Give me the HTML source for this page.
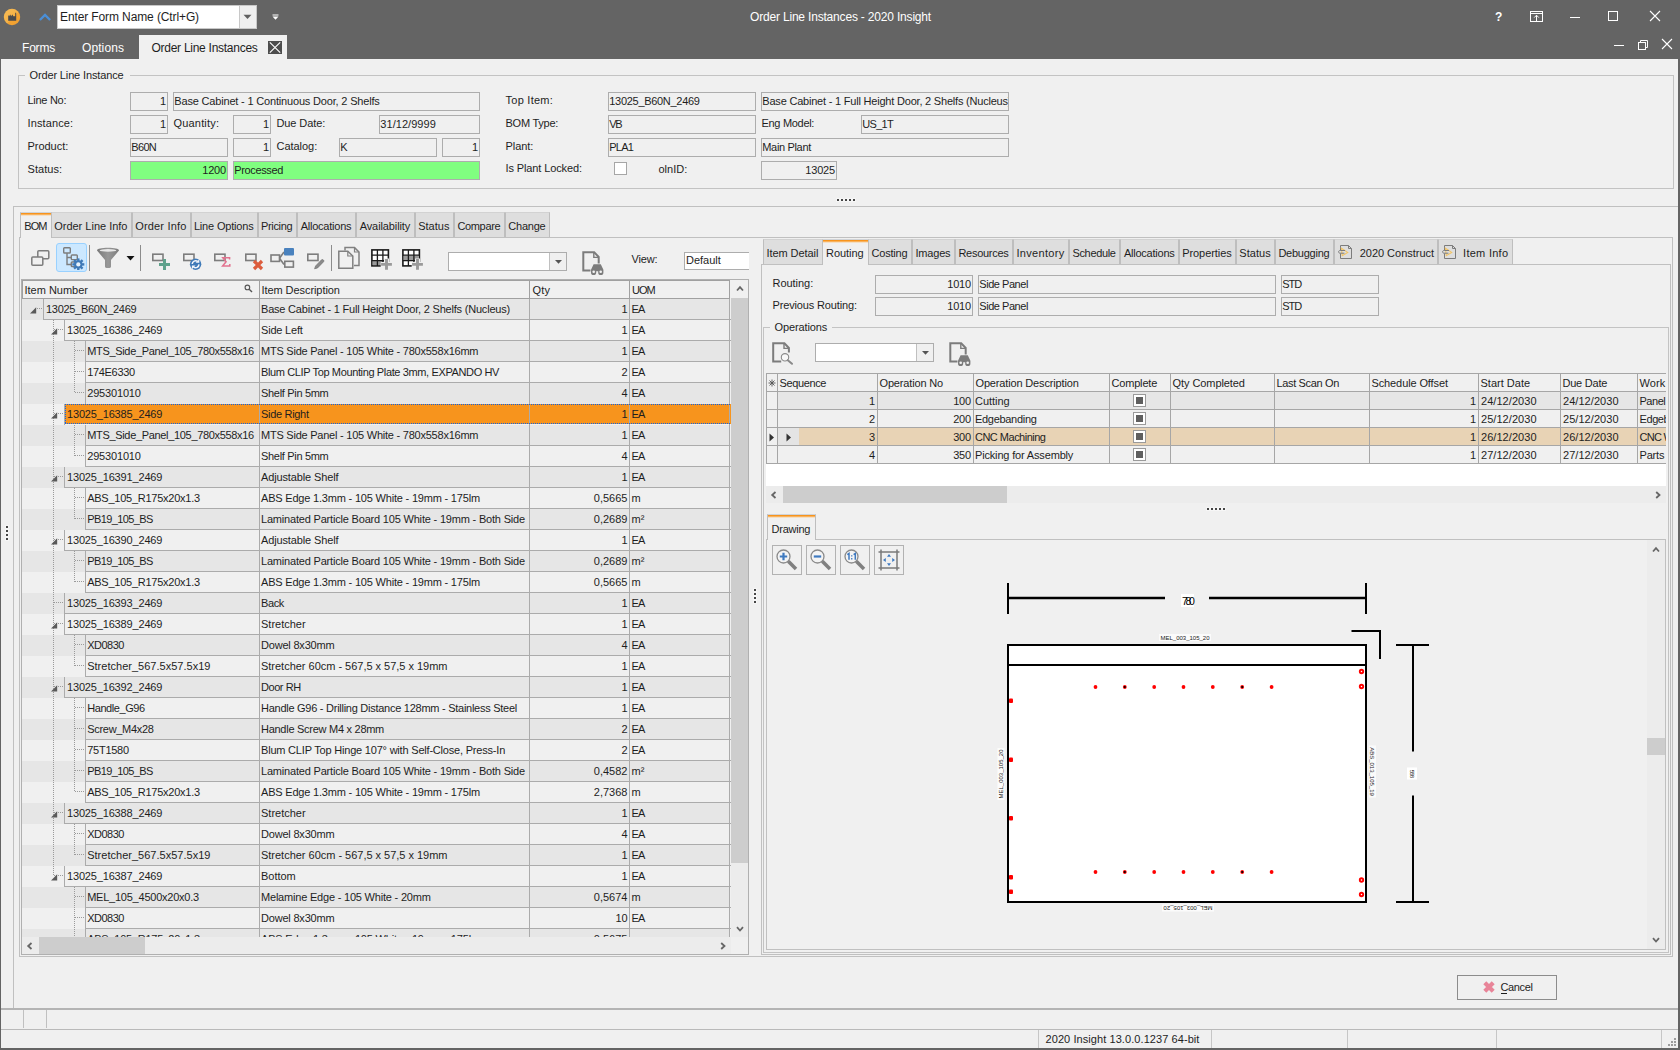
<!DOCTYPE html><html><head><meta charset="utf-8"><title>Order Line Instances - 2020 Insight</title><style>
*{box-sizing:border-box;margin:0;padding:0}
html,body{width:1680px;height:1050px;overflow:hidden;background:#f0f0f0}
body{position:relative;font-family:"Liberation Sans",sans-serif;font-size:11px;color:#1e1e1e}
div,span,svg{position:absolute}
.t{white-space:nowrap}
.f{border:1px solid #adadad;background:#f0f0f0;white-space:nowrap;overflow:hidden;font-size:11px;line-height:15px;padding:1px 1px 0 0.300px;letter-spacing:-0.2px}
.r{text-align:right}
.hl{height:1px;background:#b9b9b9}
.vl{width:1px;background:#b9b9b9}
.tab{background:#dedede;border:1px solid #bebebe;border-top-color:#d2d2d2;border-bottom:none}
.tabA{background:linear-gradient(to bottom,#f7941d 0,#f7941d 1px,#f9b25c 1px,#f9b25c 2px,#f4dfc4 2px,#f4dfc4 3px,#f0f0f0 3px);border:1px solid #bebebe;border-top-color:#cfd3d8;border-bottom:none}
</style></head><body>
<div style="left:0px;top:0px;width:1680px;height:59px;background:#646464"></div>
<div style="left:0px;top:59px;width:1px;height:991px;background:#646464"></div>
<div style="left:1678px;top:59px;width:2px;height:991px;background:#646464"></div>
<div style="left:0px;top:1048px;width:1680px;height:2px;background:#646464"></div>
<svg style="left:3px;top:8px" width="18" height="18" viewBox="0 0 18 18"><defs><linearGradient id="ag" x1="0" y1="0" x2="1" y2="1"><stop offset="0" stop-color="#f7bd58"/><stop offset="0.550" stop-color="#f5b145"/><stop offset="0.560" stop-color="#f2a232"/><stop offset="1" stop-color="#f0a030"/></linearGradient></defs><circle cx="9" cy="9" r="8.200" fill="url(#ag)"/><path d="M5.200 12.700V7l0.900 1.300 1.100-1.700 1 1.700 1.100-1.700 1.100 1.700h1.800V4.800h1V12.700z" fill="#4a4a4c"/></svg>
<svg style="left:38px;top:12px" width="14" height="10" viewBox="0 0 14 10"><path d="M1.900 8L7 2.900l5.100 5.100" fill="none" stroke="#4a8fd8" stroke-width="2.300"/></svg>
<div style="left:57px;top:5px;width:200px;height:24px;background:#fff;border:1px solid #c8c8c8"></div>
<div style="left:239px;top:6px;width:17px;height:22px;background:#efefef;border-left:1px solid #c8c8c8"></div>
<svg style="left:243px;top:14px" width="9" height="6" viewBox="0 0 9 6"><path d="M0.5 0.8h8L4.5 5z" fill="#606060"/></svg>
<span class="t" style="top:10px;font-size:12px;line-height:14px;letter-spacing:-0.112px;left:60px;color:#1e1e1e;">Enter Form Name (Ctrl+G)</span>
<svg style="left:272px;top:14px" width="8" height="7" viewBox="0 0 8 7"><path d="M0.5 0.5h6v1h-6zM0.5 2.6h6L3.5 5.8z" fill="#fff"/></svg>
<span class="t" style="top:10px;font-size:12px;line-height:14px;letter-spacing:-0.184px;left:750px;color:#fff;">Order Line Instances - 2020 Insight</span>
<span class="t" style="top:10px;font-size:12px;line-height:14px;letter-spacing:0.000px;left:1495px;color:#fff;font-weight:bold;">?</span>
<svg style="left:1529px;top:10px" width="15" height="13" viewBox="0 0 15 13"><rect x="1.5" y="1.5" width="12" height="10" fill="none" stroke="#fff" stroke-width="1"/><path d="M1.5 3.5h12M7.5 11.5V5.2M5.2 7.6l2.3-2.4 2.3 2.4" fill="none" stroke="#fff" stroke-width="1"/></svg>
<div style="left:1570px;top:17px;width:10px;height:1px;background:#fff"></div>
<div style="left:1608px;top:11px;width:10px;height:10px;border:1px solid #fff"></div>
<svg style="left:1649px;top:10px" width="12" height="12" viewBox="0 0 12 12"><path d="M1 1l10 10M11 1L1 11" stroke="#fff" stroke-width="1.1" fill="none"/></svg>
<div style="left:1614px;top:45px;width:10px;height:1px;background:#fff"></div>
<svg style="left:1637px;top:39px" width="12" height="12" viewBox="0 0 12 12"><path d="M3.5 3.5V1.5h7v7h-2" fill="none" stroke="#fff"/><rect x="1.5" y="3.5" width="7" height="7" fill="none" stroke="#fff"/></svg>
<svg style="left:1661px;top:38px" width="12" height="12" viewBox="0 0 12 12"><path d="M1 1l10 10M11 1L1 11" stroke="#fff" stroke-width="1.1" fill="none"/></svg>
<span class="t" style="top:41px;font-size:12px;line-height:14px;letter-spacing:-0.199px;left:22px;color:#fff;">Forms</span>
<span class="t" style="top:41px;font-size:12px;line-height:14px;letter-spacing:0.092px;left:82px;color:#fff;">Options</span>
<div style="left:139px;top:35px;width:148px;height:24px;background:#f0f0f0"></div>
<span class="t" style="top:41px;font-size:12px;line-height:14px;letter-spacing:-0.269px;left:151.5px;color:#1e1e1e;">Order Line Instances</span>
<div style="left:268px;top:41px;width:14px;height:13px;background:#4d4d4d"></div>
<svg style="left:268px;top:41px" width="14" height="13" viewBox="0 0 14 13"><path d="M1.8 1.3l10.4 10.4M12.2 1.3L1.8 11.7" stroke="#fff" stroke-width="1.1" fill="none"/></svg>
<div style="left:18px;top:75px;width:1656px;height:114px;border:1px solid #c3c3c3"></div>
<div style="left:25px;top:74px;width:105px;height:3px;background:#f0f0f0"></div>
<span class="t" style="top:69px;font-size:11px;line-height:13px;letter-spacing:-0.137px;left:29.5px;">Order Line Instance</span>
<span class="t" style="top:94px;font-size:11px;line-height:13px;letter-spacing:-0.285px;left:27.5px;">Line No:</span>
<div class="f r" style="left:130px;top:92px;width:38px;height:19px;letter-spacing:-0.165px;">1</div>
<div class="f" style="left:173px;top:92px;width:307px;height:19px;letter-spacing:-0.177px;">Base Cabinet - 1 Continuous Door, 2 Shelfs</div>
<span class="t" style="top:117px;font-size:11px;line-height:13px;letter-spacing:0.110px;left:27.5px;">Instance:</span>
<div class="f r" style="left:130px;top:115px;width:38px;height:19px;letter-spacing:-0.165px;">1</div>
<span class="t" style="top:117px;font-size:11px;line-height:13px;letter-spacing:0.179px;left:173.5px;">Quantity:</span>
<div class="f r" style="left:233px;top:115px;width:38px;height:19px;letter-spacing:-0.165px;">1</div>
<span class="t" style="top:117px;font-size:11px;line-height:13px;letter-spacing:-0.102px;left:276.5px;">Due Date:</span>
<div class="f" style="left:379px;top:115px;width:101px;height:19px;letter-spacing:0.050px;">31/12/9999</div>
<span class="t" style="top:140px;font-size:11px;line-height:13px;letter-spacing:-0.037px;left:27.5px;">Product:</span>
<div class="f" style="left:130px;top:138px;width:98px;height:19px;letter-spacing:-0.679px;">B60N</div>
<div class="f r" style="left:233px;top:138px;width:38px;height:19px;letter-spacing:-0.165px;">1</div>
<span class="t" style="top:140px;font-size:11px;line-height:13px;letter-spacing:-0.037px;left:276.5px;">Catalog:</span>
<div class="f" style="left:339px;top:138px;width:98px;height:19px;letter-spacing:-1.386px;">K</div>
<div class="f r" style="left:442px;top:138px;width:38px;height:19px;letter-spacing:-0.165px;">1</div>
<span class="t" style="top:163px;font-size:11px;line-height:13px;letter-spacing:0.068px;left:27.5px;">Status:</span>
<div class="f r" style="left:130px;top:161px;width:98px;height:19px;letter-spacing:-0.165px;background:#80ff80">1200</div>
<div class="f" style="left:233px;top:161px;width:247px;height:19px;letter-spacing:-0.373px;background:#80ff80">Processed</div>
<span class="t" style="top:94px;font-size:11px;line-height:13px;letter-spacing:0.264px;left:505.5px;">Top Item:</span>
<div class="f" style="left:608px;top:92px;width:148px;height:19px;letter-spacing:-0.302px;">13025_B60N_2469</div>
<div class="f" style="left:761px;top:92px;width:248px;height:19px;letter-spacing:-0.205px;">Base Cabinet - 1 Full Height Door, 2 Shelfs (Nucleus)</div>
<span class="t" style="top:117px;font-size:11px;line-height:13px;letter-spacing:-0.249px;left:505.5px;">BOM Type:</span>
<div class="f" style="left:608px;top:115px;width:148px;height:19px;letter-spacing:-1.386px;">VB</div>
<span class="t" style="top:117px;font-size:11px;line-height:13px;letter-spacing:-0.307px;left:761.5px;">Eng Model:</span>
<div class="f" style="left:861px;top:115px;width:148px;height:19px;letter-spacing:-0.696px;">US_1T</div>
<span class="t" style="top:140px;font-size:11px;line-height:13px;letter-spacing:-0.059px;left:505.5px;">Plant:</span>
<div class="f" style="left:608px;top:138px;width:148px;height:19px;letter-spacing:-0.775px;">PLA1</div>
<div class="f" style="left:761px;top:138px;width:248px;height:19px;letter-spacing:-0.336px;">Main Plant</div>
<span class="t" style="top:162px;font-size:11px;line-height:13px;letter-spacing:-0.118px;left:505.5px;">Is Plant Locked:</span>
<div style="left:614px;top:162px;width:13px;height:13px;background:#fff;border:1px solid #a6a6a6"></div>
<span class="t" style="top:163px;font-size:11px;line-height:13px;letter-spacing:0.006px;left:658.5px;">olnID:</span>
<div class="f r" style="left:761px;top:161px;width:76px;height:19px;letter-spacing:-0.165px;">13025</div>
<div style="left:837px;top:199px;width:2px;height:2px;background:#454545;outline:1px solid #f6f6f6"></div>
<div style="left:841px;top:199px;width:2px;height:2px;background:#454545;outline:1px solid #f6f6f6"></div>
<div style="left:845px;top:199px;width:2px;height:2px;background:#454545;outline:1px solid #f6f6f6"></div>
<div style="left:849px;top:199px;width:2px;height:2px;background:#454545;outline:1px solid #f6f6f6"></div>
<div style="left:853px;top:199px;width:2px;height:2px;background:#454545;outline:1px solid #f6f6f6"></div>
<div style="left:13px;top:206px;width:1665px;height:1px;background:#c0c0c0"></div>
<div style="left:13px;top:206px;width:1px;height:803px;background:#c0c0c0"></div>
<div style="left:1px;top:1008px;width:1677px;height:2px;background:#b4b4b4"></div>
<div style="left:23px;top:1010px;width:1px;height:18px;background:#c0c0c0"></div>
<div style="left:46px;top:1010px;width:1px;height:18px;background:#c0c0c0"></div>
<div style="left:1px;top:1029px;width:1677px;height:1px;background:#b9b9b9"></div>
<div style="left:1038px;top:1030px;width:1px;height:18px;background:#c6c6c6"></div>
<div style="left:1211px;top:1030px;width:1px;height:18px;background:#c6c6c6"></div>
<div style="left:1347px;top:1030px;width:1px;height:18px;background:#c6c6c6"></div>
<div style="left:1496px;top:1030px;width:1px;height:18px;background:#c6c6c6"></div>
<div style="left:1661px;top:1030px;width:1px;height:18px;background:#c6c6c6"></div>
<span class="t" style="top:1033px;font-size:11px;line-height:13px;letter-spacing:0.075px;left:1045.5px;">2020 Insight 13.0.0.1237 64-bit</span>
<div style="left:1674px;top:1044px;width:2px;height:2px;background:#9c9c9c"></div>
<div style="left:1671px;top:1044px;width:2px;height:2px;background:#9c9c9c"></div>
<div style="left:1674px;top:1041px;width:2px;height:2px;background:#9c9c9c"></div>
<div style="left:1668px;top:1044px;width:2px;height:2px;background:#9c9c9c"></div>
<div style="left:1671px;top:1041px;width:2px;height:2px;background:#9c9c9c"></div>
<div style="left:1674px;top:1038px;width:2px;height:2px;background:#9c9c9c"></div>
<div style="left:19px;top:237px;width:1654px;height:720px;border:1px solid #c0c0c0"></div>
<div class="tab" style="left:505px;top:212px;width:45px;height:25px;"></div>
<span class="t" style="top:220px;font-size:11px;line-height:13px;letter-spacing:-0.238px;left:508.3px;">Change</span>
<div class="tab" style="left:454px;top:212px;width:51px;height:25px;"></div>
<span class="t" style="top:220px;font-size:11px;line-height:13px;letter-spacing:-0.334px;left:457.4px;">Compare</span>
<div class="tab" style="left:415px;top:212px;width:39px;height:25px;"></div>
<span class="t" style="top:220px;font-size:11px;line-height:13px;letter-spacing:0.003px;left:418.2px;">Status</span>
<div class="tab" style="left:356px;top:212px;width:59px;height:25px;"></div>
<span class="t" style="top:220px;font-size:11px;line-height:13px;letter-spacing:-0.105px;left:359.7px;">Availability</span>
<div class="tab" style="left:297px;top:212px;width:59px;height:25px;"></div>
<span class="t" style="top:220px;font-size:11px;line-height:13px;letter-spacing:-0.236px;left:300.7px;">Allocations</span>
<div class="tab" style="left:258px;top:212px;width:39px;height:25px;"></div>
<span class="t" style="top:220px;font-size:11px;line-height:13px;letter-spacing:-0.332px;left:261.0px;">Pricing</span>
<div class="tab" style="left:191px;top:212px;width:67px;height:25px;"></div>
<span class="t" style="top:220px;font-size:11px;line-height:13px;letter-spacing:-0.172px;left:193.89999999999998px;">Line Options</span>
<div class="tab" style="left:132px;top:212px;width:59px;height:25px;"></div>
<span class="t" style="top:220px;font-size:11px;line-height:13px;letter-spacing:0.178px;left:135.2px;">Order Info</span>
<div class="tab" style="left:51px;top:212px;width:81px;height:25px;"></div>
<span class="t" style="top:220px;font-size:11px;line-height:13px;letter-spacing:-0.005px;left:54.2px;">Order Line Info</span>
<div class="tabA" style="left:20px;top:212px;width:32px;height:26px;"></div>
<span class="t" style="top:220px;font-size:11px;line-height:13px;letter-spacing:-0.885px;left:24.2px;">BOM</span>
<svg style="left:30px;top:249px" width="21" height="18" viewBox="0 0 21 18"><rect x="7.8" y="1.8" width="11" height="8" rx="1" fill="none" stroke="#7d7d7d" stroke-width="1.5"/><rect x="1.8" y="8" width="11" height="8.2" rx="1" fill="#f0f0f0" stroke="#7d7d7d" stroke-width="1.5"/></svg>
<div style="left:56px;top:243px;width:31px;height:29px;background:#cce8ff;border:1px solid #99d1ff;border-radius:3px"></div>
<svg style="left:61px;top:246px" width="26" height="24" viewBox="0 0 26 24"><rect x="2.7" y="1.8" width="6.6" height="5.2" rx="0.8" fill="none" stroke="#7d7d7d" stroke-width="1.4"/><path d="M6 7v11.5h4M6 11.5h4" fill="none" stroke="#7d7d7d" stroke-width="1.4"/><rect x="10.3" y="9" width="6" height="4.6" rx="0.8" fill="none" stroke="#7d7d7d" stroke-width="1.4"/><rect x="10.3" y="16" width="4" height="4.6" rx="0.8" fill="none" stroke="#7d7d7d" stroke-width="1.4"/><g transform="translate(17.3,18.4)"><circle r="4.1" fill="#3f7ab8"/><rect x="-1.2" y="-6" width="2.4" height="3" fill="#3f7ab8" transform="rotate(0)"/><rect x="-1.2" y="-6" width="2.4" height="3" fill="#3f7ab8" transform="rotate(45)"/><rect x="-1.2" y="-6" width="2.4" height="3" fill="#3f7ab8" transform="rotate(90)"/><rect x="-1.2" y="-6" width="2.4" height="3" fill="#3f7ab8" transform="rotate(135)"/><rect x="-1.2" y="-6" width="2.4" height="3" fill="#3f7ab8" transform="rotate(180)"/><rect x="-1.2" y="-6" width="2.4" height="3" fill="#3f7ab8" transform="rotate(225)"/><rect x="-1.2" y="-6" width="2.4" height="3" fill="#3f7ab8" transform="rotate(270)"/><rect x="-1.2" y="-6" width="2.4" height="3" fill="#3f7ab8" transform="rotate(315)"/><circle r="2.1" fill="#e8f2fb"/></g></svg>
<div style="left:89px;top:245px;width:1px;height:26px;background:#8c8c8c"></div>
<svg style="left:96px;top:247px" width="24" height="22" viewBox="0 0 24 22"><defs><linearGradient id="fg" x1="0" x2="1"><stop offset="0" stop-color="#787878"/><stop offset="0.500" stop-color="#989898"/><stop offset="1" stop-color="#7c7c7c"/></linearGradient></defs><path d="M1 3.5C1 1.8 6 0.8 12 0.8S23 1.8 23 3.5L15 13v6.5c0 1-1 1.5-3 1.5s-3-.5-3-1.5V13z" fill="url(#fg)"/><ellipse cx="12" cy="3.400" rx="8.300" ry="1.300" fill="#e8e8e8"/></svg>
<svg style="left:126px;top:256px" width="9" height="5" viewBox="0 0 9 5"><path d="M0.5 0h8L4.5 4.6z" fill="#111"/></svg>
<div style="left:140px;top:245px;width:1px;height:26px;background:#8c8c8c"></div>
<svg style="left:151px;top:252px" width="22" height="20" viewBox="0 0 22 20"><rect x="1.8" y="2.200" width="10.200" height="6.300" fill="none" stroke="#7d7d7d" stroke-width="1.600"/><path d="M13.5 7v11M8 12.5h11" stroke="#5fa28c" stroke-width="3" fill="none"/></svg>
<svg style="left:182px;top:252px" width="22" height="20" viewBox="0 0 22 20"><rect x="1.8" y="2.200" width="10.200" height="6.300" fill="none" stroke="#7d7d7d" stroke-width="1.600"/><circle cx="13.600" cy="12.200" r="5.700" fill="#3f7ab8"/><path d="M10.200 12a3.400 3.400 0 0 1 5.400-2.600M17 12.400a3.400 3.400 0 0 1-5.400 2.600" stroke="#f2f6fb" stroke-width="1.500" fill="none"/><path d="M17.300 7.200v3.600h-3.600zM9.900 17.200v-3.600h3.600z" fill="#f2f6fb"/></svg>
<svg style="left:213px;top:252px" width="22" height="20" viewBox="0 0 22 20"><rect x="1.8" y="2.200" width="10.200" height="6.300" fill="none" stroke="#7d7d7d" stroke-width="1.600"/><path d="M16.600 7.600V5.700H9.800l3.300 4.100-3.500 4.300h7.200v-2" fill="none" stroke="#e2728e" stroke-width="1.500"/></svg>
<svg style="left:244px;top:252px" width="22" height="20" viewBox="0 0 22 20"><rect x="1.8" y="2.200" width="10.200" height="6.300" fill="none" stroke="#7d7d7d" stroke-width="1.600"/><path d="M10 9l8 8M18 9l-8 8" stroke="#dc5c3c" stroke-width="3.2" fill="none"/></svg>
<svg style="left:269px;top:247px" width="27" height="22" viewBox="0 0 27 22"><rect x="2" y="8" width="8.5" height="6.4" fill="none" stroke="#7d7d7d" stroke-width="1.6"/><path d="M10.5 11.2L15 5M10.5 11.2L15 17.5" stroke="#7d7d7d" stroke-width="1.6" fill="none"/><rect x="15" y="1" width="10" height="7.6" rx="1" fill="#4a82be"/><rect x="15.8" y="14.3" width="8.6" height="5.8" fill="none" stroke="#7d7d7d" stroke-width="1.6"/></svg>
<svg style="left:306px;top:252px" width="22" height="20" viewBox="0 0 22 20"><rect x="1.8" y="2.200" width="10.200" height="6.300" fill="none" stroke="#7d7d7d" stroke-width="1.600"/><path d="M8.6 16.8l1-2.8 6-6.2c1-.9 3 .8 2 1.9l-6 6.2z" fill="#8a8a8a" stroke="#777" stroke-width="0.8"/></svg>
<div style="left:331px;top:245px;width:1px;height:26px;background:#8c8c8c"></div>
<svg style="left:337px;top:246px" width="25" height="24" viewBox="0 0 25 24"><path d="M8 4.5V1.6h9.5L22 6v13.5h-5" fill="#f0f0f0" stroke="#808080" stroke-width="1.5"/><path d="M17.5 1.6V6H22" fill="none" stroke="#808080" stroke-width="1.2"/><path d="M1.8 5.2h9L15.8 10v12.2h-14z" fill="#f0f0f0" stroke="#808080" stroke-width="1.5"/><path d="M10.8 5.2V10h5" fill="none" stroke="#808080" stroke-width="1.2"/></svg>
<svg style="left:371px;top:248px" width="22" height="23" viewBox="0 0 22 23"><rect x="0.900" y="1.900" width="16.500" height="16" fill="#fff" stroke="#1a1a1a" stroke-width="1.600"/><rect x="1.700" y="12.3" width="15" height="4.800" fill="#9a9a9a"/><path d="M6.400 1.900v16M11.900 1.900v16M0.900 7.200h16.500M0.900 12.600h16.500" stroke="#1a1a1a" stroke-width="1.300" fill="none"/><path d="M15.500 10.600v11.600M9.700 16.400h11.600" stroke="#f0f0f0" stroke-width="5" fill="none"/><path d="M15.500 11v10.800M10.100 16.400h10.800" stroke="#9a9a9a" stroke-width="2.900" fill="none"/></svg>
<svg style="left:402px;top:248px" width="22" height="23" viewBox="0 0 22 23"><rect x="0.900" y="1.900" width="16.500" height="16" fill="#fff" stroke="#1a1a1a" stroke-width="1.600"/><rect x="1.700" y="7.5" width="15" height="4.800" fill="#9a9a9a"/><path d="M6.400 1.900v16M11.900 1.900v16M0.900 7.200h16.500M0.900 12.600h16.500" stroke="#1a1a1a" stroke-width="1.300" fill="none"/><path d="M15.500 10.600v11.600M9.700 16.400h11.600" stroke="#f0f0f0" stroke-width="5" fill="none"/><path d="M15.500 11v10.800M10.100 16.400h10.800" stroke="#9a9a9a" stroke-width="2.900" fill="none"/></svg>
<div style="left:448px;top:252px;width:119px;height:19px;background:#fff;border:1px solid #adadad"></div>
<div style="left:549px;top:253px;width:17px;height:17px;background:#f0f0f0;border-left:1px solid #c0c0c0"></div>
<svg style="left:555px;top:260px" width="7" height="4" viewBox="0 0 7 4"><path d="M0 0h7L3.5 3.8z" fill="#555"/></svg>
<svg style="left:581px;top:250px" width="24" height="26" viewBox="0 0 24 26"><path d="M17.700 13.500V7L13.200 2.200H2.300V20.500H9.500" fill="none" stroke="#7c7c7c" stroke-width="2"/><path d="M12.800 2.200V7.400H17.700" fill="none" stroke="#7c7c7c" stroke-width="1.400"/><path d="M12.600 14.300h7.200l2.600 5.500v2.600a2.600 2.600 0 0 1-5.200 0v-1.200h-2v1.200a2.600 2.600 0 0 1-5.200 0v-2.600z" fill="#7c7c7c"/><circle cx="12.700" cy="21.700" r="1.300" fill="#f4f4f4"/><circle cx="19.700" cy="21.700" r="1.300" fill="#f4f4f4"/></svg>
<span class="t" style="top:253px;font-size:11px;line-height:13px;letter-spacing:-0.182px;left:631.5px;">View:</span>
<div style="left:684px;top:252px;width:66px;height:18px;background:#fff;border:1px solid #adadad;border-right:none"></div>
<span class="t" style="top:254px;font-size:11px;line-height:13px;letter-spacing:-0.019px;left:686px;">Default</span>
<div style="left:749px;top:240px;width:12px;height:35px;background:#f0f0f0"></div>
<div style="left:21px;top:279px;width:728px;height:676px;border:1px solid #b0b0b0;background:#f0f0f0"></div>
<div style="left:22px;top:280px;width:708px;height:1px;background:#a0a0a0"></div>
<div style="left:22px;top:298px;width:708px;height:1px;background:#a0a0a0"></div>
<div style="left:22px;top:281px;width:1px;height:17px;background:#a0a0a0"></div>
<div style="left:259px;top:281px;width:1px;height:17px;background:#a0a0a0"></div>
<div style="left:529px;top:281px;width:1px;height:17px;background:#a0a0a0"></div>
<div style="left:629px;top:281px;width:1px;height:17px;background:#a0a0a0"></div>
<div style="left:729px;top:281px;width:1px;height:17px;background:#a0a0a0"></div>
<span class="t" style="top:284px;font-size:11px;line-height:13px;letter-spacing:-0.007px;left:24.5px;">Item Number</span>
<span class="t" style="top:284px;font-size:11px;line-height:13px;letter-spacing:-0.069px;left:261.5px;">Item Description</span>
<span class="t" style="top:284px;font-size:11px;line-height:13px;letter-spacing:0.248px;left:532.5px;">Qty</span>
<span class="t" style="top:284px;font-size:11px;line-height:13px;letter-spacing:-0.949px;left:632px;">UOM</span>
<svg style="left:244px;top:284px" width="9" height="9" viewBox="0 0 9 9"><circle cx="3.4" cy="3.4" r="2.3" fill="none" stroke="#555" stroke-width="1.1"/><path d="M5.2 5.2l2.8 2.800" stroke="#555" stroke-width="1.4"/></svg>
<div style="left:22px;top:299px;width:709px;height:638px;overflow:hidden">
<div style="left:0px;top:0px;width:708px;height:21px;background:#e6e6e6"></div>
<div style="left:21px;top:20px;width:688px;height:1px;background:#ababab"></div>
<div style="left:21px;top:0px;width:1px;height:21px;background:#ababab"></div>
<div style="left:237px;top:0px;width:1px;height:21px;background:#ababab"></div>
<div style="left:507px;top:0px;width:1px;height:21px;background:#ababab"></div>
<div style="left:607px;top:0px;width:1px;height:21px;background:#ababab"></div>
<div style="left:707px;top:0px;width:1px;height:21px;background:#ababab"></div>
<span class="t" style="top:4px;font-size:11px;line-height:13px;letter-spacing:-0.302px;left:24px;">13025_B60N_2469</span>
<span class="t" style="top:4px;font-size:11px;line-height:13px;letter-spacing:-0.205px;left:239px;">Base Cabinet - 1 Full Height Door, 2 Shelfs (Nucleus)</span>
<span class="t" style="top:4px;font-size:11px;line-height:13px;letter-spacing:-0.165px;right:103.5px;">1</span>
<span class="t" style="top:4px;font-size:11px;line-height:13px;letter-spacing:-0.889px;left:609.5px;">EA</span>
<div style="left:0px;top:21px;width:708px;height:21px;background:#f0f0f0"></div>
<div style="left:42px;top:41px;width:667px;height:1px;background:#ababab"></div>
<div style="left:42px;top:21px;width:1px;height:21px;background:#ababab"></div>
<div style="left:237px;top:21px;width:1px;height:21px;background:#ababab"></div>
<div style="left:507px;top:21px;width:1px;height:21px;background:#ababab"></div>
<div style="left:607px;top:21px;width:1px;height:21px;background:#ababab"></div>
<div style="left:707px;top:21px;width:1px;height:21px;background:#ababab"></div>
<span class="t" style="top:25px;font-size:11px;line-height:13px;letter-spacing:-0.165px;left:45px;">13025_16386_2469</span>
<span class="t" style="top:25px;font-size:11px;line-height:13px;letter-spacing:-0.195px;left:239px;">Side Left</span>
<span class="t" style="top:25px;font-size:11px;line-height:13px;letter-spacing:-0.165px;right:103.5px;">1</span>
<span class="t" style="top:25px;font-size:11px;line-height:13px;letter-spacing:-0.889px;left:609.5px;">EA</span>
<div style="left:0px;top:42px;width:708px;height:21px;background:#e6e6e6"></div>
<div style="left:63px;top:62px;width:646px;height:1px;background:#ababab"></div>
<div style="left:63px;top:42px;width:1px;height:21px;background:#ababab"></div>
<div style="left:237px;top:42px;width:1px;height:21px;background:#ababab"></div>
<div style="left:507px;top:42px;width:1px;height:21px;background:#ababab"></div>
<div style="left:607px;top:42px;width:1px;height:21px;background:#ababab"></div>
<div style="left:707px;top:42px;width:1px;height:21px;background:#ababab"></div>
<span class="t" style="top:46px;font-size:11px;line-height:13px;letter-spacing:-0.327px;left:65.2px;">MTS_Side_Panel_105_780x558x16</span>
<span class="t" style="top:46px;font-size:11px;line-height:13px;letter-spacing:-0.233px;left:239px;">MTS Side Panel - 105 White - 780x558x16mm</span>
<span class="t" style="top:46px;font-size:11px;line-height:13px;letter-spacing:-0.165px;right:103.5px;">1</span>
<span class="t" style="top:46px;font-size:11px;line-height:13px;letter-spacing:-0.889px;left:609.5px;">EA</span>
<div style="left:0px;top:63px;width:708px;height:21px;background:#f0f0f0"></div>
<div style="left:63px;top:83px;width:646px;height:1px;background:#ababab"></div>
<div style="left:63px;top:63px;width:1px;height:21px;background:#ababab"></div>
<div style="left:237px;top:63px;width:1px;height:21px;background:#ababab"></div>
<div style="left:507px;top:63px;width:1px;height:21px;background:#ababab"></div>
<div style="left:607px;top:63px;width:1px;height:21px;background:#ababab"></div>
<div style="left:707px;top:63px;width:1px;height:21px;background:#ababab"></div>
<span class="t" style="top:67px;font-size:11px;line-height:13px;letter-spacing:-0.318px;left:65.2px;">174E6330</span>
<span class="t" style="top:67px;font-size:11px;line-height:13px;letter-spacing:-0.369px;left:239px;">Blum CLIP Top Mounting Plate 3mm, EXPANDO HV</span>
<span class="t" style="top:67px;font-size:11px;line-height:13px;letter-spacing:-0.165px;right:103.5px;">2</span>
<span class="t" style="top:67px;font-size:11px;line-height:13px;letter-spacing:-0.889px;left:609.5px;">EA</span>
<div style="left:0px;top:84px;width:708px;height:21px;background:#e6e6e6"></div>
<div style="left:63px;top:84px;width:1px;height:21px;background:#ababab"></div>
<div style="left:237px;top:84px;width:1px;height:21px;background:#ababab"></div>
<div style="left:507px;top:84px;width:1px;height:21px;background:#ababab"></div>
<div style="left:607px;top:84px;width:1px;height:21px;background:#ababab"></div>
<div style="left:707px;top:84px;width:1px;height:21px;background:#ababab"></div>
<span class="t" style="top:88px;font-size:11px;line-height:13px;letter-spacing:-0.165px;left:65.2px;">295301010</span>
<span class="t" style="top:88px;font-size:11px;line-height:13px;letter-spacing:-0.313px;left:239px;">Shelf Pin 5mm</span>
<span class="t" style="top:88px;font-size:11px;line-height:13px;letter-spacing:-0.165px;right:103.5px;">4</span>
<span class="t" style="top:88px;font-size:11px;line-height:13px;letter-spacing:-0.889px;left:609.5px;">EA</span>
<div style="left:0px;top:105px;width:708px;height:21px;background:#f0f0f0"></div>
<div style="left:43px;top:105px;width:666px;height:20px;background:#f7941d"></div>
<div style="left:42px;top:105px;width:1px;height:21px;background:#ababab"></div>
<div style="left:237px;top:105px;width:1px;height:21px;background:#ababab"></div>
<div style="left:507px;top:105px;width:1px;height:21px;background:#ababab"></div>
<div style="left:607px;top:105px;width:1px;height:21px;background:#ababab"></div>
<div style="left:707px;top:105px;width:1px;height:21px;background:#ababab"></div>
<span class="t" style="top:109px;font-size:11px;line-height:13px;letter-spacing:-0.165px;left:45px;">13025_16385_2469</span>
<span class="t" style="top:109px;font-size:11px;line-height:13px;letter-spacing:-0.313px;left:239px;">Side Right</span>
<span class="t" style="top:109px;font-size:11px;line-height:13px;letter-spacing:-0.165px;right:103.5px;">1</span>
<span class="t" style="top:109px;font-size:11px;line-height:13px;letter-spacing:-0.889px;left:609.5px;">EA</span>
<div style="left:43px;top:105px;width:666px;height:1px;background-image:linear-gradient(to right,#0f62e6 50%,transparent 50%);background-size:2px 1px;"></div>
<div style="left:43px;top:124px;width:666px;height:1px;background-image:linear-gradient(to right,#0f62e6 50%,transparent 50%);background-size:2px 1px;"></div>
<div style="left:43px;top:105px;width:1px;height:20px;background-image:linear-gradient(to bottom,#0f62e6 50%,transparent 50%);background-size:1px 2px;"></div>
<div style="left:0px;top:126px;width:708px;height:21px;background:#e6e6e6"></div>
<div style="left:63px;top:146px;width:646px;height:1px;background:#ababab"></div>
<div style="left:63px;top:126px;width:1px;height:21px;background:#ababab"></div>
<div style="left:237px;top:126px;width:1px;height:21px;background:#ababab"></div>
<div style="left:507px;top:126px;width:1px;height:21px;background:#ababab"></div>
<div style="left:607px;top:126px;width:1px;height:21px;background:#ababab"></div>
<div style="left:707px;top:126px;width:1px;height:21px;background:#ababab"></div>
<span class="t" style="top:130px;font-size:11px;line-height:13px;letter-spacing:-0.327px;left:65.2px;">MTS_Side_Panel_105_780x558x16</span>
<span class="t" style="top:130px;font-size:11px;line-height:13px;letter-spacing:-0.233px;left:239px;">MTS Side Panel - 105 White - 780x558x16mm</span>
<span class="t" style="top:130px;font-size:11px;line-height:13px;letter-spacing:-0.165px;right:103.5px;">1</span>
<span class="t" style="top:130px;font-size:11px;line-height:13px;letter-spacing:-0.889px;left:609.5px;">EA</span>
<div style="left:0px;top:147px;width:708px;height:21px;background:#f0f0f0"></div>
<div style="left:63px;top:167px;width:646px;height:1px;background:#ababab"></div>
<div style="left:63px;top:147px;width:1px;height:21px;background:#ababab"></div>
<div style="left:237px;top:147px;width:1px;height:21px;background:#ababab"></div>
<div style="left:507px;top:147px;width:1px;height:21px;background:#ababab"></div>
<div style="left:607px;top:147px;width:1px;height:21px;background:#ababab"></div>
<div style="left:707px;top:147px;width:1px;height:21px;background:#ababab"></div>
<span class="t" style="top:151px;font-size:11px;line-height:13px;letter-spacing:-0.165px;left:65.2px;">295301010</span>
<span class="t" style="top:151px;font-size:11px;line-height:13px;letter-spacing:-0.313px;left:239px;">Shelf Pin 5mm</span>
<span class="t" style="top:151px;font-size:11px;line-height:13px;letter-spacing:-0.165px;right:103.5px;">4</span>
<span class="t" style="top:151px;font-size:11px;line-height:13px;letter-spacing:-0.889px;left:609.5px;">EA</span>
<div style="left:0px;top:168px;width:708px;height:21px;background:#e6e6e6"></div>
<div style="left:42px;top:188px;width:667px;height:1px;background:#ababab"></div>
<div style="left:42px;top:168px;width:1px;height:21px;background:#ababab"></div>
<div style="left:237px;top:168px;width:1px;height:21px;background:#ababab"></div>
<div style="left:507px;top:168px;width:1px;height:21px;background:#ababab"></div>
<div style="left:607px;top:168px;width:1px;height:21px;background:#ababab"></div>
<div style="left:707px;top:168px;width:1px;height:21px;background:#ababab"></div>
<span class="t" style="top:172px;font-size:11px;line-height:13px;letter-spacing:-0.165px;left:45px;">13025_16391_2469</span>
<span class="t" style="top:172px;font-size:11px;line-height:13px;letter-spacing:-0.132px;left:239px;">Adjustable Shelf</span>
<span class="t" style="top:172px;font-size:11px;line-height:13px;letter-spacing:-0.165px;right:103.5px;">1</span>
<span class="t" style="top:172px;font-size:11px;line-height:13px;letter-spacing:-0.889px;left:609.5px;">EA</span>
<div style="left:0px;top:189px;width:708px;height:21px;background:#f0f0f0"></div>
<div style="left:63px;top:209px;width:646px;height:1px;background:#ababab"></div>
<div style="left:63px;top:189px;width:1px;height:21px;background:#ababab"></div>
<div style="left:237px;top:189px;width:1px;height:21px;background:#ababab"></div>
<div style="left:507px;top:189px;width:1px;height:21px;background:#ababab"></div>
<div style="left:607px;top:189px;width:1px;height:21px;background:#ababab"></div>
<div style="left:707px;top:189px;width:1px;height:21px;background:#ababab"></div>
<span class="t" style="top:193px;font-size:11px;line-height:13px;letter-spacing:-0.249px;left:65.2px;">ABS_105_R175x20x1.3</span>
<span class="t" style="top:193px;font-size:11px;line-height:13px;letter-spacing:-0.194px;left:239px;">ABS Edge 1.3mm - 105 White - 19mm - 175lm</span>
<span class="t" style="top:193px;font-size:11px;line-height:13px;letter-spacing:0.014px;right:103.5px;">0,5665</span>
<span class="t" style="top:193px;font-size:11px;line-height:13px;letter-spacing:-0.234px;left:609.5px;">m</span>
<div style="left:0px;top:210px;width:708px;height:21px;background:#e6e6e6"></div>
<div style="left:63px;top:230px;width:646px;height:1px;background:#ababab"></div>
<div style="left:63px;top:210px;width:1px;height:21px;background:#ababab"></div>
<div style="left:237px;top:210px;width:1px;height:21px;background:#ababab"></div>
<div style="left:507px;top:210px;width:1px;height:21px;background:#ababab"></div>
<div style="left:607px;top:210px;width:1px;height:21px;background:#ababab"></div>
<div style="left:707px;top:210px;width:1px;height:21px;background:#ababab"></div>
<span class="t" style="top:214px;font-size:11px;line-height:13px;letter-spacing:-0.609px;left:65.2px;">PB19_105_BS</span>
<span class="t" style="top:214px;font-size:11px;line-height:13px;letter-spacing:-0.189px;left:239px;">Laminated Particle Board 105 White - 19mm - Both Side</span>
<span class="t" style="top:214px;font-size:11px;line-height:13px;letter-spacing:0.014px;right:103.5px;">0,2689</span>
<span class="t" style="top:214px;font-size:11px;line-height:13px;letter-spacing:0.036px;left:609.5px;">m²</span>
<div style="left:0px;top:231px;width:708px;height:21px;background:#f0f0f0"></div>
<div style="left:42px;top:251px;width:667px;height:1px;background:#ababab"></div>
<div style="left:42px;top:231px;width:1px;height:21px;background:#ababab"></div>
<div style="left:237px;top:231px;width:1px;height:21px;background:#ababab"></div>
<div style="left:507px;top:231px;width:1px;height:21px;background:#ababab"></div>
<div style="left:607px;top:231px;width:1px;height:21px;background:#ababab"></div>
<div style="left:707px;top:231px;width:1px;height:21px;background:#ababab"></div>
<span class="t" style="top:235px;font-size:11px;line-height:13px;letter-spacing:-0.165px;left:45px;">13025_16390_2469</span>
<span class="t" style="top:235px;font-size:11px;line-height:13px;letter-spacing:-0.132px;left:239px;">Adjustable Shelf</span>
<span class="t" style="top:235px;font-size:11px;line-height:13px;letter-spacing:-0.165px;right:103.5px;">1</span>
<span class="t" style="top:235px;font-size:11px;line-height:13px;letter-spacing:-0.889px;left:609.5px;">EA</span>
<div style="left:0px;top:252px;width:708px;height:21px;background:#e6e6e6"></div>
<div style="left:63px;top:272px;width:646px;height:1px;background:#ababab"></div>
<div style="left:63px;top:252px;width:1px;height:21px;background:#ababab"></div>
<div style="left:237px;top:252px;width:1px;height:21px;background:#ababab"></div>
<div style="left:507px;top:252px;width:1px;height:21px;background:#ababab"></div>
<div style="left:607px;top:252px;width:1px;height:21px;background:#ababab"></div>
<div style="left:707px;top:252px;width:1px;height:21px;background:#ababab"></div>
<span class="t" style="top:256px;font-size:11px;line-height:13px;letter-spacing:-0.609px;left:65.2px;">PB19_105_BS</span>
<span class="t" style="top:256px;font-size:11px;line-height:13px;letter-spacing:-0.189px;left:239px;">Laminated Particle Board 105 White - 19mm - Both Side</span>
<span class="t" style="top:256px;font-size:11px;line-height:13px;letter-spacing:0.014px;right:103.5px;">0,2689</span>
<span class="t" style="top:256px;font-size:11px;line-height:13px;letter-spacing:0.036px;left:609.5px;">m²</span>
<div style="left:0px;top:273px;width:708px;height:21px;background:#f0f0f0"></div>
<div style="left:63px;top:293px;width:646px;height:1px;background:#ababab"></div>
<div style="left:63px;top:273px;width:1px;height:21px;background:#ababab"></div>
<div style="left:237px;top:273px;width:1px;height:21px;background:#ababab"></div>
<div style="left:507px;top:273px;width:1px;height:21px;background:#ababab"></div>
<div style="left:607px;top:273px;width:1px;height:21px;background:#ababab"></div>
<div style="left:707px;top:273px;width:1px;height:21px;background:#ababab"></div>
<span class="t" style="top:277px;font-size:11px;line-height:13px;letter-spacing:-0.249px;left:65.2px;">ABS_105_R175x20x1.3</span>
<span class="t" style="top:277px;font-size:11px;line-height:13px;letter-spacing:-0.194px;left:239px;">ABS Edge 1.3mm - 105 White - 19mm - 175lm</span>
<span class="t" style="top:277px;font-size:11px;line-height:13px;letter-spacing:0.014px;right:103.5px;">0,5665</span>
<span class="t" style="top:277px;font-size:11px;line-height:13px;letter-spacing:-0.234px;left:609.5px;">m</span>
<div style="left:0px;top:294px;width:708px;height:21px;background:#e6e6e6"></div>
<div style="left:42px;top:314px;width:667px;height:1px;background:#ababab"></div>
<div style="left:42px;top:294px;width:1px;height:21px;background:#ababab"></div>
<div style="left:237px;top:294px;width:1px;height:21px;background:#ababab"></div>
<div style="left:507px;top:294px;width:1px;height:21px;background:#ababab"></div>
<div style="left:607px;top:294px;width:1px;height:21px;background:#ababab"></div>
<div style="left:707px;top:294px;width:1px;height:21px;background:#ababab"></div>
<span class="t" style="top:298px;font-size:11px;line-height:13px;letter-spacing:-0.165px;left:45px;">13025_16393_2469</span>
<span class="t" style="top:298px;font-size:11px;line-height:13px;letter-spacing:-0.410px;left:239px;">Back</span>
<span class="t" style="top:298px;font-size:11px;line-height:13px;letter-spacing:-0.165px;right:103.5px;">1</span>
<span class="t" style="top:298px;font-size:11px;line-height:13px;letter-spacing:-0.889px;left:609.5px;">EA</span>
<div style="left:0px;top:315px;width:708px;height:21px;background:#f0f0f0"></div>
<div style="left:42px;top:335px;width:667px;height:1px;background:#ababab"></div>
<div style="left:42px;top:315px;width:1px;height:21px;background:#ababab"></div>
<div style="left:237px;top:315px;width:1px;height:21px;background:#ababab"></div>
<div style="left:507px;top:315px;width:1px;height:21px;background:#ababab"></div>
<div style="left:607px;top:315px;width:1px;height:21px;background:#ababab"></div>
<div style="left:707px;top:315px;width:1px;height:21px;background:#ababab"></div>
<span class="t" style="top:319px;font-size:11px;line-height:13px;letter-spacing:-0.165px;left:45px;">13025_16389_2469</span>
<span class="t" style="top:319px;font-size:11px;line-height:13px;letter-spacing:0.001px;left:239px;">Stretcher</span>
<span class="t" style="top:319px;font-size:11px;line-height:13px;letter-spacing:-0.165px;right:103.5px;">1</span>
<span class="t" style="top:319px;font-size:11px;line-height:13px;letter-spacing:-0.889px;left:609.5px;">EA</span>
<div style="left:0px;top:336px;width:708px;height:21px;background:#e6e6e6"></div>
<div style="left:63px;top:356px;width:646px;height:1px;background:#ababab"></div>
<div style="left:63px;top:336px;width:1px;height:21px;background:#ababab"></div>
<div style="left:237px;top:336px;width:1px;height:21px;background:#ababab"></div>
<div style="left:507px;top:336px;width:1px;height:21px;background:#ababab"></div>
<div style="left:607px;top:336px;width:1px;height:21px;background:#ababab"></div>
<div style="left:707px;top:336px;width:1px;height:21px;background:#ababab"></div>
<span class="t" style="top:340px;font-size:11px;line-height:13px;letter-spacing:-0.508px;left:65.2px;">XD0830</span>
<span class="t" style="top:340px;font-size:11px;line-height:13px;letter-spacing:-0.199px;left:239px;">Dowel 8x30mm</span>
<span class="t" style="top:340px;font-size:11px;line-height:13px;letter-spacing:-0.165px;right:103.5px;">4</span>
<span class="t" style="top:340px;font-size:11px;line-height:13px;letter-spacing:-0.889px;left:609.5px;">EA</span>
<div style="left:0px;top:357px;width:708px;height:21px;background:#f0f0f0"></div>
<div style="left:63px;top:377px;width:646px;height:1px;background:#ababab"></div>
<div style="left:63px;top:357px;width:1px;height:21px;background:#ababab"></div>
<div style="left:237px;top:357px;width:1px;height:21px;background:#ababab"></div>
<div style="left:507px;top:357px;width:1px;height:21px;background:#ababab"></div>
<div style="left:607px;top:357px;width:1px;height:21px;background:#ababab"></div>
<div style="left:707px;top:357px;width:1px;height:21px;background:#ababab"></div>
<span class="t" style="top:361px;font-size:11px;line-height:13px;letter-spacing:0.013px;left:65.2px;">Stretcher_567.5x57.5x19</span>
<span class="t" style="top:361px;font-size:11px;line-height:13px;letter-spacing:-0.016px;left:239px;">Stretcher 60cm - 567,5 x 57,5 x 19mm</span>
<span class="t" style="top:361px;font-size:11px;line-height:13px;letter-spacing:-0.165px;right:103.5px;">1</span>
<span class="t" style="top:361px;font-size:11px;line-height:13px;letter-spacing:-0.889px;left:609.5px;">EA</span>
<div style="left:0px;top:378px;width:708px;height:21px;background:#e6e6e6"></div>
<div style="left:42px;top:398px;width:667px;height:1px;background:#ababab"></div>
<div style="left:42px;top:378px;width:1px;height:21px;background:#ababab"></div>
<div style="left:237px;top:378px;width:1px;height:21px;background:#ababab"></div>
<div style="left:507px;top:378px;width:1px;height:21px;background:#ababab"></div>
<div style="left:607px;top:378px;width:1px;height:21px;background:#ababab"></div>
<div style="left:707px;top:378px;width:1px;height:21px;background:#ababab"></div>
<span class="t" style="top:382px;font-size:11px;line-height:13px;letter-spacing:-0.165px;left:45px;">13025_16392_2469</span>
<span class="t" style="top:382px;font-size:11px;line-height:13px;letter-spacing:-0.443px;left:239px;">Door RH</span>
<span class="t" style="top:382px;font-size:11px;line-height:13px;letter-spacing:-0.165px;right:103.5px;">1</span>
<span class="t" style="top:382px;font-size:11px;line-height:13px;letter-spacing:-0.889px;left:609.5px;">EA</span>
<div style="left:0px;top:399px;width:708px;height:21px;background:#f0f0f0"></div>
<div style="left:63px;top:419px;width:646px;height:1px;background:#ababab"></div>
<div style="left:63px;top:399px;width:1px;height:21px;background:#ababab"></div>
<div style="left:237px;top:399px;width:1px;height:21px;background:#ababab"></div>
<div style="left:507px;top:399px;width:1px;height:21px;background:#ababab"></div>
<div style="left:607px;top:399px;width:1px;height:21px;background:#ababab"></div>
<div style="left:707px;top:399px;width:1px;height:21px;background:#ababab"></div>
<span class="t" style="top:403px;font-size:11px;line-height:13px;letter-spacing:-0.423px;left:65.2px;">Handle_G96</span>
<span class="t" style="top:403px;font-size:11px;line-height:13px;letter-spacing:-0.264px;left:239px;">Handle G96 - Drilling Distance 128mm - Stainless Steel</span>
<span class="t" style="top:403px;font-size:11px;line-height:13px;letter-spacing:-0.165px;right:103.5px;">1</span>
<span class="t" style="top:403px;font-size:11px;line-height:13px;letter-spacing:-0.889px;left:609.5px;">EA</span>
<div style="left:0px;top:420px;width:708px;height:21px;background:#e6e6e6"></div>
<div style="left:63px;top:440px;width:646px;height:1px;background:#ababab"></div>
<div style="left:63px;top:420px;width:1px;height:21px;background:#ababab"></div>
<div style="left:237px;top:420px;width:1px;height:21px;background:#ababab"></div>
<div style="left:507px;top:420px;width:1px;height:21px;background:#ababab"></div>
<div style="left:607px;top:420px;width:1px;height:21px;background:#ababab"></div>
<div style="left:707px;top:420px;width:1px;height:21px;background:#ababab"></div>
<span class="t" style="top:424px;font-size:11px;line-height:13px;letter-spacing:-0.293px;left:65.2px;">Screw_M4x28</span>
<span class="t" style="top:424px;font-size:11px;line-height:13px;letter-spacing:-0.272px;left:239px;">Handle Screw M4 x 28mm</span>
<span class="t" style="top:424px;font-size:11px;line-height:13px;letter-spacing:-0.165px;right:103.5px;">2</span>
<span class="t" style="top:424px;font-size:11px;line-height:13px;letter-spacing:-0.889px;left:609.5px;">EA</span>
<div style="left:0px;top:441px;width:708px;height:21px;background:#f0f0f0"></div>
<div style="left:63px;top:461px;width:646px;height:1px;background:#ababab"></div>
<div style="left:63px;top:441px;width:1px;height:21px;background:#ababab"></div>
<div style="left:237px;top:441px;width:1px;height:21px;background:#ababab"></div>
<div style="left:507px;top:441px;width:1px;height:21px;background:#ababab"></div>
<div style="left:607px;top:441px;width:1px;height:21px;background:#ababab"></div>
<div style="left:707px;top:441px;width:1px;height:21px;background:#ababab"></div>
<span class="t" style="top:445px;font-size:11px;line-height:13px;letter-spacing:-0.251px;left:65.2px;">75T1580</span>
<span class="t" style="top:445px;font-size:11px;line-height:13px;letter-spacing:-0.200px;left:239px;">Blum CLIP Top Hinge 107° with Self-Close, Press-In</span>
<span class="t" style="top:445px;font-size:11px;line-height:13px;letter-spacing:-0.165px;right:103.5px;">2</span>
<span class="t" style="top:445px;font-size:11px;line-height:13px;letter-spacing:-0.889px;left:609.5px;">EA</span>
<div style="left:0px;top:462px;width:708px;height:21px;background:#e6e6e6"></div>
<div style="left:63px;top:482px;width:646px;height:1px;background:#ababab"></div>
<div style="left:63px;top:462px;width:1px;height:21px;background:#ababab"></div>
<div style="left:237px;top:462px;width:1px;height:21px;background:#ababab"></div>
<div style="left:507px;top:462px;width:1px;height:21px;background:#ababab"></div>
<div style="left:607px;top:462px;width:1px;height:21px;background:#ababab"></div>
<div style="left:707px;top:462px;width:1px;height:21px;background:#ababab"></div>
<span class="t" style="top:466px;font-size:11px;line-height:13px;letter-spacing:-0.609px;left:65.2px;">PB19_105_BS</span>
<span class="t" style="top:466px;font-size:11px;line-height:13px;letter-spacing:-0.189px;left:239px;">Laminated Particle Board 105 White - 19mm - Both Side</span>
<span class="t" style="top:466px;font-size:11px;line-height:13px;letter-spacing:0.014px;right:103.5px;">0,4582</span>
<span class="t" style="top:466px;font-size:11px;line-height:13px;letter-spacing:0.036px;left:609.5px;">m²</span>
<div style="left:0px;top:483px;width:708px;height:21px;background:#f0f0f0"></div>
<div style="left:63px;top:503px;width:646px;height:1px;background:#ababab"></div>
<div style="left:63px;top:483px;width:1px;height:21px;background:#ababab"></div>
<div style="left:237px;top:483px;width:1px;height:21px;background:#ababab"></div>
<div style="left:507px;top:483px;width:1px;height:21px;background:#ababab"></div>
<div style="left:607px;top:483px;width:1px;height:21px;background:#ababab"></div>
<div style="left:707px;top:483px;width:1px;height:21px;background:#ababab"></div>
<span class="t" style="top:487px;font-size:11px;line-height:13px;letter-spacing:-0.249px;left:65.2px;">ABS_105_R175x20x1.3</span>
<span class="t" style="top:487px;font-size:11px;line-height:13px;letter-spacing:-0.194px;left:239px;">ABS Edge 1.3mm - 105 White - 19mm - 175lm</span>
<span class="t" style="top:487px;font-size:11px;line-height:13px;letter-spacing:0.014px;right:103.5px;">2,7368</span>
<span class="t" style="top:487px;font-size:11px;line-height:13px;letter-spacing:-0.234px;left:609.5px;">m</span>
<div style="left:0px;top:504px;width:708px;height:21px;background:#e6e6e6"></div>
<div style="left:42px;top:524px;width:667px;height:1px;background:#ababab"></div>
<div style="left:42px;top:504px;width:1px;height:21px;background:#ababab"></div>
<div style="left:237px;top:504px;width:1px;height:21px;background:#ababab"></div>
<div style="left:507px;top:504px;width:1px;height:21px;background:#ababab"></div>
<div style="left:607px;top:504px;width:1px;height:21px;background:#ababab"></div>
<div style="left:707px;top:504px;width:1px;height:21px;background:#ababab"></div>
<span class="t" style="top:508px;font-size:11px;line-height:13px;letter-spacing:-0.165px;left:45px;">13025_16388_2469</span>
<span class="t" style="top:508px;font-size:11px;line-height:13px;letter-spacing:0.001px;left:239px;">Stretcher</span>
<span class="t" style="top:508px;font-size:11px;line-height:13px;letter-spacing:-0.165px;right:103.5px;">1</span>
<span class="t" style="top:508px;font-size:11px;line-height:13px;letter-spacing:-0.889px;left:609.5px;">EA</span>
<div style="left:0px;top:525px;width:708px;height:21px;background:#f0f0f0"></div>
<div style="left:63px;top:545px;width:646px;height:1px;background:#ababab"></div>
<div style="left:63px;top:525px;width:1px;height:21px;background:#ababab"></div>
<div style="left:237px;top:525px;width:1px;height:21px;background:#ababab"></div>
<div style="left:507px;top:525px;width:1px;height:21px;background:#ababab"></div>
<div style="left:607px;top:525px;width:1px;height:21px;background:#ababab"></div>
<div style="left:707px;top:525px;width:1px;height:21px;background:#ababab"></div>
<span class="t" style="top:529px;font-size:11px;line-height:13px;letter-spacing:-0.508px;left:65.2px;">XD0830</span>
<span class="t" style="top:529px;font-size:11px;line-height:13px;letter-spacing:-0.199px;left:239px;">Dowel 8x30mm</span>
<span class="t" style="top:529px;font-size:11px;line-height:13px;letter-spacing:-0.165px;right:103.5px;">4</span>
<span class="t" style="top:529px;font-size:11px;line-height:13px;letter-spacing:-0.889px;left:609.5px;">EA</span>
<div style="left:0px;top:546px;width:708px;height:21px;background:#e6e6e6"></div>
<div style="left:63px;top:566px;width:646px;height:1px;background:#ababab"></div>
<div style="left:63px;top:546px;width:1px;height:21px;background:#ababab"></div>
<div style="left:237px;top:546px;width:1px;height:21px;background:#ababab"></div>
<div style="left:507px;top:546px;width:1px;height:21px;background:#ababab"></div>
<div style="left:607px;top:546px;width:1px;height:21px;background:#ababab"></div>
<div style="left:707px;top:546px;width:1px;height:21px;background:#ababab"></div>
<span class="t" style="top:550px;font-size:11px;line-height:13px;letter-spacing:0.013px;left:65.2px;">Stretcher_567.5x57.5x19</span>
<span class="t" style="top:550px;font-size:11px;line-height:13px;letter-spacing:-0.016px;left:239px;">Stretcher 60cm - 567,5 x 57,5 x 19mm</span>
<span class="t" style="top:550px;font-size:11px;line-height:13px;letter-spacing:-0.165px;right:103.5px;">1</span>
<span class="t" style="top:550px;font-size:11px;line-height:13px;letter-spacing:-0.889px;left:609.5px;">EA</span>
<div style="left:0px;top:567px;width:708px;height:21px;background:#f0f0f0"></div>
<div style="left:42px;top:587px;width:667px;height:1px;background:#ababab"></div>
<div style="left:42px;top:567px;width:1px;height:21px;background:#ababab"></div>
<div style="left:237px;top:567px;width:1px;height:21px;background:#ababab"></div>
<div style="left:507px;top:567px;width:1px;height:21px;background:#ababab"></div>
<div style="left:607px;top:567px;width:1px;height:21px;background:#ababab"></div>
<div style="left:707px;top:567px;width:1px;height:21px;background:#ababab"></div>
<span class="t" style="top:571px;font-size:11px;line-height:13px;letter-spacing:-0.165px;left:45px;">13025_16387_2469</span>
<span class="t" style="top:571px;font-size:11px;line-height:13px;letter-spacing:-0.021px;left:239px;">Bottom</span>
<span class="t" style="top:571px;font-size:11px;line-height:13px;letter-spacing:-0.165px;right:103.5px;">1</span>
<span class="t" style="top:571px;font-size:11px;line-height:13px;letter-spacing:-0.889px;left:609.5px;">EA</span>
<div style="left:0px;top:588px;width:708px;height:21px;background:#e6e6e6"></div>
<div style="left:63px;top:608px;width:646px;height:1px;background:#ababab"></div>
<div style="left:63px;top:588px;width:1px;height:21px;background:#ababab"></div>
<div style="left:237px;top:588px;width:1px;height:21px;background:#ababab"></div>
<div style="left:507px;top:588px;width:1px;height:21px;background:#ababab"></div>
<div style="left:607px;top:588px;width:1px;height:21px;background:#ababab"></div>
<div style="left:707px;top:588px;width:1px;height:21px;background:#ababab"></div>
<span class="t" style="top:592px;font-size:11px;line-height:13px;letter-spacing:-0.237px;left:65.2px;">MEL_105_4500x20x0.3</span>
<span class="t" style="top:592px;font-size:11px;line-height:13px;letter-spacing:-0.201px;left:239px;">Melamine Edge - 105 White - 20mm</span>
<span class="t" style="top:592px;font-size:11px;line-height:13px;letter-spacing:0.014px;right:103.5px;">0,5674</span>
<span class="t" style="top:592px;font-size:11px;line-height:13px;letter-spacing:-0.234px;left:609.5px;">m</span>
<div style="left:0px;top:609px;width:708px;height:21px;background:#f0f0f0"></div>
<div style="left:63px;top:629px;width:646px;height:1px;background:#ababab"></div>
<div style="left:63px;top:609px;width:1px;height:21px;background:#ababab"></div>
<div style="left:237px;top:609px;width:1px;height:21px;background:#ababab"></div>
<div style="left:507px;top:609px;width:1px;height:21px;background:#ababab"></div>
<div style="left:607px;top:609px;width:1px;height:21px;background:#ababab"></div>
<div style="left:707px;top:609px;width:1px;height:21px;background:#ababab"></div>
<span class="t" style="top:613px;font-size:11px;line-height:13px;letter-spacing:-0.508px;left:65.2px;">XD0830</span>
<span class="t" style="top:613px;font-size:11px;line-height:13px;letter-spacing:-0.199px;left:239px;">Dowel 8x30mm</span>
<span class="t" style="top:613px;font-size:11px;line-height:13px;letter-spacing:-0.165px;right:103.5px;">10</span>
<span class="t" style="top:613px;font-size:11px;line-height:13px;letter-spacing:-0.889px;left:609.5px;">EA</span>
<div style="left:0px;top:630px;width:708px;height:21px;background:#e6e6e6"></div>
<div style="left:63px;top:650px;width:646px;height:1px;background:#ababab"></div>
<div style="left:63px;top:630px;width:1px;height:21px;background:#ababab"></div>
<div style="left:237px;top:630px;width:1px;height:21px;background:#ababab"></div>
<div style="left:507px;top:630px;width:1px;height:21px;background:#ababab"></div>
<div style="left:607px;top:630px;width:1px;height:21px;background:#ababab"></div>
<div style="left:707px;top:630px;width:1px;height:21px;background:#ababab"></div>
<span class="t" style="top:634px;font-size:11px;line-height:13px;letter-spacing:-0.249px;left:65.2px;">ABS_105_R175x20x1.3</span>
<span class="t" style="top:634px;font-size:11px;line-height:13px;letter-spacing:-0.194px;left:239px;">ABS Edge 1.3mm - 105 White - 19mm - 175lm</span>
<span class="t" style="top:634px;font-size:11px;line-height:13px;letter-spacing:0.014px;right:103.5px;">0,5675</span>
<span class="t" style="top:634px;font-size:11px;line-height:13px;letter-spacing:-0.234px;left:609.5px;">m</span>
<div style="left:31px;top:21px;width:1px;height:556px;background-image:linear-gradient(to bottom,#9a9a9a 50%,transparent 50%);background-size:1px 2px;"></div>
<div style="left:32px;top:30px;width:9px;height:1px;background-image:linear-gradient(to right,#9a9a9a 50%,transparent 50%);background-size:2px 1px;"></div>
<div style="left:32px;top:114px;width:9px;height:1px;background-image:linear-gradient(to right,#9a9a9a 50%,transparent 50%);background-size:2px 1px;"></div>
<div style="left:32px;top:177px;width:9px;height:1px;background-image:linear-gradient(to right,#9a9a9a 50%,transparent 50%);background-size:2px 1px;"></div>
<div style="left:32px;top:240px;width:9px;height:1px;background-image:linear-gradient(to right,#9a9a9a 50%,transparent 50%);background-size:2px 1px;"></div>
<div style="left:32px;top:303px;width:9px;height:1px;background-image:linear-gradient(to right,#9a9a9a 50%,transparent 50%);background-size:2px 1px;"></div>
<div style="left:32px;top:324px;width:9px;height:1px;background-image:linear-gradient(to right,#9a9a9a 50%,transparent 50%);background-size:2px 1px;"></div>
<div style="left:32px;top:387px;width:9px;height:1px;background-image:linear-gradient(to right,#9a9a9a 50%,transparent 50%);background-size:2px 1px;"></div>
<div style="left:32px;top:513px;width:9px;height:1px;background-image:linear-gradient(to right,#9a9a9a 50%,transparent 50%);background-size:2px 1px;"></div>
<div style="left:32px;top:576px;width:9px;height:1px;background-image:linear-gradient(to right,#9a9a9a 50%,transparent 50%);background-size:2px 1px;"></div>
<div style="left:15px;top:9px;width:5px;height:1px;background-image:linear-gradient(to right,#9a9a9a 50%,transparent 50%);background-size:2px 1px;"></div>
<div style="left:52px;top:42px;width:1px;height:52px;background-image:linear-gradient(to bottom,#9a9a9a 50%,transparent 50%);background-size:1px 2px;"></div>
<div style="left:53px;top:51px;width:9px;height:1px;background-image:linear-gradient(to right,#9a9a9a 50%,transparent 50%);background-size:2px 1px;"></div>
<div style="left:53px;top:72px;width:9px;height:1px;background-image:linear-gradient(to right,#9a9a9a 50%,transparent 50%);background-size:2px 1px;"></div>
<div style="left:53px;top:93px;width:9px;height:1px;background-image:linear-gradient(to right,#9a9a9a 50%,transparent 50%);background-size:2px 1px;"></div>
<div style="left:52px;top:126px;width:1px;height:31px;background-image:linear-gradient(to bottom,#9a9a9a 50%,transparent 50%);background-size:1px 2px;"></div>
<div style="left:53px;top:135px;width:9px;height:1px;background-image:linear-gradient(to right,#9a9a9a 50%,transparent 50%);background-size:2px 1px;"></div>
<div style="left:53px;top:156px;width:9px;height:1px;background-image:linear-gradient(to right,#9a9a9a 50%,transparent 50%);background-size:2px 1px;"></div>
<div style="left:52px;top:189px;width:1px;height:31px;background-image:linear-gradient(to bottom,#9a9a9a 50%,transparent 50%);background-size:1px 2px;"></div>
<div style="left:53px;top:198px;width:9px;height:1px;background-image:linear-gradient(to right,#9a9a9a 50%,transparent 50%);background-size:2px 1px;"></div>
<div style="left:53px;top:219px;width:9px;height:1px;background-image:linear-gradient(to right,#9a9a9a 50%,transparent 50%);background-size:2px 1px;"></div>
<div style="left:52px;top:252px;width:1px;height:31px;background-image:linear-gradient(to bottom,#9a9a9a 50%,transparent 50%);background-size:1px 2px;"></div>
<div style="left:53px;top:261px;width:9px;height:1px;background-image:linear-gradient(to right,#9a9a9a 50%,transparent 50%);background-size:2px 1px;"></div>
<div style="left:53px;top:282px;width:9px;height:1px;background-image:linear-gradient(to right,#9a9a9a 50%,transparent 50%);background-size:2px 1px;"></div>
<div style="left:52px;top:336px;width:1px;height:31px;background-image:linear-gradient(to bottom,#9a9a9a 50%,transparent 50%);background-size:1px 2px;"></div>
<div style="left:53px;top:345px;width:9px;height:1px;background-image:linear-gradient(to right,#9a9a9a 50%,transparent 50%);background-size:2px 1px;"></div>
<div style="left:53px;top:366px;width:9px;height:1px;background-image:linear-gradient(to right,#9a9a9a 50%,transparent 50%);background-size:2px 1px;"></div>
<div style="left:52px;top:399px;width:1px;height:94px;background-image:linear-gradient(to bottom,#9a9a9a 50%,transparent 50%);background-size:1px 2px;"></div>
<div style="left:53px;top:408px;width:9px;height:1px;background-image:linear-gradient(to right,#9a9a9a 50%,transparent 50%);background-size:2px 1px;"></div>
<div style="left:53px;top:429px;width:9px;height:1px;background-image:linear-gradient(to right,#9a9a9a 50%,transparent 50%);background-size:2px 1px;"></div>
<div style="left:53px;top:450px;width:9px;height:1px;background-image:linear-gradient(to right,#9a9a9a 50%,transparent 50%);background-size:2px 1px;"></div>
<div style="left:53px;top:471px;width:9px;height:1px;background-image:linear-gradient(to right,#9a9a9a 50%,transparent 50%);background-size:2px 1px;"></div>
<div style="left:53px;top:492px;width:9px;height:1px;background-image:linear-gradient(to right,#9a9a9a 50%,transparent 50%);background-size:2px 1px;"></div>
<div style="left:52px;top:525px;width:1px;height:31px;background-image:linear-gradient(to bottom,#9a9a9a 50%,transparent 50%);background-size:1px 2px;"></div>
<div style="left:53px;top:534px;width:9px;height:1px;background-image:linear-gradient(to right,#9a9a9a 50%,transparent 50%);background-size:2px 1px;"></div>
<div style="left:53px;top:555px;width:9px;height:1px;background-image:linear-gradient(to right,#9a9a9a 50%,transparent 50%);background-size:2px 1px;"></div>
<div style="left:52px;top:588px;width:1px;height:52px;background-image:linear-gradient(to bottom,#9a9a9a 50%,transparent 50%);background-size:1px 2px;"></div>
<div style="left:53px;top:597px;width:9px;height:1px;background-image:linear-gradient(to right,#9a9a9a 50%,transparent 50%);background-size:2px 1px;"></div>
<div style="left:53px;top:618px;width:9px;height:1px;background-image:linear-gradient(to right,#9a9a9a 50%,transparent 50%);background-size:2px 1px;"></div>
<div style="left:53px;top:639px;width:9px;height:1px;background-image:linear-gradient(to right,#9a9a9a 50%,transparent 50%);background-size:2px 1px;"></div>
<svg style="left:8px;top:7.5px" width="7" height="7" viewBox="0 0 7 7"><path d="M6.200 0.300V6.500H0z" fill="#5a5a5a"/></svg>
<svg style="left:29px;top:28.5px" width="7" height="7" viewBox="0 0 7 7"><path d="M6.200 0.300V6.500H0z" fill="#5a5a5a"/></svg>
<svg style="left:29px;top:112.5px" width="7" height="7" viewBox="0 0 7 7"><path d="M6.200 0.300V6.500H0z" fill="#5a5a5a"/></svg>
<svg style="left:29px;top:175.5px" width="7" height="7" viewBox="0 0 7 7"><path d="M6.200 0.300V6.500H0z" fill="#5a5a5a"/></svg>
<svg style="left:29px;top:238.5px" width="7" height="7" viewBox="0 0 7 7"><path d="M6.200 0.300V6.500H0z" fill="#5a5a5a"/></svg>
<svg style="left:29px;top:322.5px" width="7" height="7" viewBox="0 0 7 7"><path d="M6.200 0.300V6.500H0z" fill="#5a5a5a"/></svg>
<svg style="left:29px;top:385.5px" width="7" height="7" viewBox="0 0 7 7"><path d="M6.200 0.300V6.500H0z" fill="#5a5a5a"/></svg>
<svg style="left:29px;top:511.5px" width="7" height="7" viewBox="0 0 7 7"><path d="M6.200 0.300V6.500H0z" fill="#5a5a5a"/></svg>
<svg style="left:29px;top:574.5px" width="7" height="7" viewBox="0 0 7 7"><path d="M6.200 0.300V6.500H0z" fill="#5a5a5a"/></svg>
</div>
<div style="left:731px;top:281px;width:17px;height:656px;background:#ececec"></div>
<div style="left:731px;top:281px;width:17px;height:17px;background:#f0f0f0"></div>
<div style="left:731px;top:298px;width:17px;height:565px;background:#cdcdcd"></div>
<svg style="left:735.5px;top:285px" width="8" height="8" viewBox="0 0 8 8"><path d="M1 5.5L4 2.2L7 5.5" fill="none" stroke="#666" stroke-width="1.800"/></svg>
<svg style="left:735.5px;top:925px" width="8" height="8" viewBox="0 0 8 8"><path d="M1 2.2L4 5.5L7 2.2" fill="none" stroke="#666" stroke-width="1.800"/></svg>
<div style="left:22px;top:937px;width:709px;height:17px;background:#ececec"></div>
<div style="left:39px;top:937px;width:106px;height:17px;background:#cdcdcd"></div>
<svg style="left:26px;top:941.5px" width="8" height="8" viewBox="0 0 8 8"><path d="M5.5 1L2.2 4L5.5 7" fill="none" stroke="#666" stroke-width="1.800"/></svg>
<svg style="left:719px;top:941.5px" width="8" height="8" viewBox="0 0 8 8"><path d="M2.2 1L5.5 4L2.2 7" fill="none" stroke="#666" stroke-width="1.800"/></svg>
<div style="left:731px;top:937px;width:17px;height:17px;background:#f0f0f0"></div>
<div style="left:754px;top:589px;width:2px;height:2px;background:#454545;outline:1px solid #f6f6f6"></div>
<div style="left:754px;top:593px;width:2px;height:2px;background:#454545;outline:1px solid #f6f6f6"></div>
<div style="left:754px;top:597px;width:2px;height:2px;background:#454545;outline:1px solid #f6f6f6"></div>
<div style="left:754px;top:601px;width:2px;height:2px;background:#454545;outline:1px solid #f6f6f6"></div>
<div style="left:6px;top:526px;width:2px;height:2px;background:#454545;outline:1px solid #f6f6f6"></div>
<div style="left:6px;top:530px;width:2px;height:2px;background:#454545;outline:1px solid #f6f6f6"></div>
<div style="left:6px;top:534px;width:2px;height:2px;background:#454545;outline:1px solid #f6f6f6"></div>
<div style="left:6px;top:538px;width:2px;height:2px;background:#454545;outline:1px solid #f6f6f6"></div>
<div style="left:761px;top:264px;width:910px;height:691px;border:1px solid #c0c0c0"></div>
<div class="tab" style="left:763px;top:239px;width:60px;height:25px;"></div>
<span class="t" style="top:247px;font-size:11px;line-height:13px;letter-spacing:-0.052px;left:766.4000000000001px;">Item Detail</span>
<div class="tab" style="left:868px;top:239px;width:44px;height:25px;"></div>
<span class="t" style="top:247px;font-size:11px;line-height:13px;letter-spacing:-0.214px;left:871.5px;">Costing</span>
<div class="tab" style="left:912px;top:239px;width:43px;height:25px;"></div>
<span class="t" style="top:247px;font-size:11px;line-height:13px;letter-spacing:-0.195px;left:915.5px;">Images</span>
<div class="tab" style="left:955px;top:239px;width:58px;height:25px;"></div>
<span class="t" style="top:247px;font-size:11px;line-height:13px;letter-spacing:-0.275px;left:958.4000000000001px;">Resources</span>
<div class="tab" style="left:1013px;top:239px;width:56px;height:25px;"></div>
<span class="t" style="top:247px;font-size:11px;line-height:13px;letter-spacing:0.306px;left:1016.5px;">Inventory</span>
<div class="tab" style="left:1069px;top:239px;width:51px;height:25px;"></div>
<span class="t" style="top:247px;font-size:11px;line-height:13px;letter-spacing:-0.358px;left:1072.5px;">Schedule</span>
<div class="tab" style="left:1120px;top:239px;width:59px;height:25px;"></div>
<span class="t" style="top:247px;font-size:11px;line-height:13px;letter-spacing:-0.227px;left:1123.9px;">Allocations</span>
<div class="tab" style="left:1179px;top:239px;width:57px;height:25px;"></div>
<span class="t" style="top:247px;font-size:11px;line-height:13px;letter-spacing:-0.063px;left:1182.2px;">Properties</span>
<div class="tab" style="left:1236px;top:239px;width:39px;height:25px;"></div>
<span class="t" style="top:247px;font-size:11px;line-height:13px;letter-spacing:0.053px;left:1239.3px;">Status</span>
<div class="tab" style="left:1275px;top:239px;width:59px;height:25px;"></div>
<span class="t" style="top:247px;font-size:11px;line-height:13px;letter-spacing:-0.245px;left:1278.4px;">Debugging</span>
<div class="tab" style="left:1334px;top:239px;width:104px;height:25px;"></div>
<span class="t" style="top:247px;font-size:11px;line-height:13px;letter-spacing:-0.021px;left:1359.7px;">2020 Construct</span>
<svg style="left:1337px;top:244px" width="16" height="16" viewBox="0 0 16 16"><path d="M3.500 6V1.500h8l3 3v10h-11V9.500" fill="none" stroke="#7c7c7c" stroke-width="1"/><path d="M11.500 1.500v3h3" fill="none" stroke="#7c7c7c" stroke-width="1"/><path d="M4.400 4.300l6.300 4.100-5.400 3.300z" fill="none" stroke="#f2c464" stroke-width="1.100"/><path d="M8 6.500H3.200c-2.200 0-2.200 2.700 0 2.700H7.400" fill="none" stroke="#7c7c7c" stroke-width="1"/></svg>
<div class="tab" style="left:1438px;top:239px;width:75px;height:25px;"></div>
<span class="t" style="top:247px;font-size:11px;line-height:13px;letter-spacing:0.267px;left:1463.1000000000001px;">Item Info</span>
<svg style="left:1441px;top:244px" width="16" height="16" viewBox="0 0 16 16"><path d="M3.500 6V1.500h8l3 3v10h-11V9.500" fill="none" stroke="#7c7c7c" stroke-width="1"/><path d="M11.500 1.500v3h3" fill="none" stroke="#7c7c7c" stroke-width="1"/><path d="M4.400 4.300l6.300 4.100-5.400 3.300z" fill="none" stroke="#f2c464" stroke-width="1.100"/><path d="M8 6.500H3.200c-2.200 0-2.200 2.700 0 2.700H7.400" fill="none" stroke="#7c7c7c" stroke-width="1"/></svg>
<div class="tabA" style="left:822px;top:239px;width:47px;height:26px;"></div>
<span class="t" style="top:247px;font-size:11px;line-height:13px;letter-spacing:-0.030px;left:826.0px;">Routing</span>
<span class="t" style="top:277px;font-size:11px;line-height:13px;letter-spacing:-0.037px;left:772.5px;">Routing:</span>
<div class="f r" style="left:875px;top:275px;width:98px;height:19px;letter-spacing:-0.165px;">1010</div>
<div class="f" style="left:978px;top:275px;width:298px;height:19px;letter-spacing:-0.460px;">Side Panel</div>
<div class="f" style="left:1281px;top:275px;width:98px;height:19px;letter-spacing:-1.051px;">STD</div>
<span class="t" style="top:299px;font-size:11px;line-height:13px;letter-spacing:-0.147px;left:772.5px;">Previous Routing:</span>
<div class="f r" style="left:875px;top:297px;width:98px;height:19px;letter-spacing:-0.165px;">1010</div>
<div class="f" style="left:978px;top:297px;width:298px;height:19px;letter-spacing:-0.460px;">Side Panel</div>
<div class="f" style="left:1281px;top:297px;width:98px;height:19px;letter-spacing:-1.051px;">STD</div>
<div style="left:763px;top:327px;width:906px;height:626px;border:1px solid #c3c3c3"></div>
<div style="left:770px;top:326px;width:62px;height:3px;background:#f0f0f0"></div>
<span class="t" style="top:321px;font-size:11px;line-height:13px;letter-spacing:-0.123px;left:774.5px;">Operations</span>
<svg style="left:771px;top:341px" width="24" height="26" viewBox="0 0 24 26"><path d="M17.900 11.500V7L13.400 2.200H2.200V20.500H10.200" fill="none" stroke="#7c7c7c" stroke-width="2"/><path d="M13 2.200V7.400H17.900" fill="none" stroke="#7c7c7c" stroke-width="1.400"/><circle cx="14" cy="16.300" r="3.700" fill="#f8f8f8" stroke="#8a8a8a" stroke-width="1.100"/><path d="M16.800 19.200l4.200 3.600" stroke="#8a8a8a" stroke-width="2" stroke-linecap="round"/></svg>
<div style="left:815px;top:343px;width:119px;height:19px;background:#fff;border:1px solid #adadad"></div>
<div style="left:916px;top:344px;width:17px;height:17px;background:#f0f0f0;border-left:1px solid #c0c0c0"></div>
<svg style="left:922px;top:351px" width="7" height="4" viewBox="0 0 7 4"><path d="M0 0h7L3.500 3.800z" fill="#555"/></svg>
<svg style="left:948px;top:341px" width="24" height="26" viewBox="0 0 24 26"><path d="M17.700 13.500V7L13.200 2.200H2.300V20.500H9.500" fill="none" stroke="#7c7c7c" stroke-width="2"/><path d="M12.800 2.200V7.400H17.700" fill="none" stroke="#7c7c7c" stroke-width="1.400"/><path d="M12.600 14.300h7.200l2.600 5.500v2.600a2.600 2.600 0 0 1-5.200 0v-1.200h-2v1.200a2.600 2.600 0 0 1-5.200 0v-2.600z" fill="#7c7c7c"/><circle cx="12.700" cy="21.700" r="1.300" fill="#f4f4f4"/><circle cx="19.700" cy="21.700" r="1.300" fill="#f4f4f4"/></svg>
<div style="left:766px;top:373px;width:900px;height:113px;background:#fff"></div>
<div style="left:766px;top:373px;width:900px;height:113px;overflow:hidden">
<div style="left:0px;top:0px;width:901px;height:19px;background:#f0f0f0"></div>
<div style="left:0px;top:19px;width:901px;height:18px;background:#e6e6e6"></div>
<div style="left:0px;top:19px;width:11px;height:18px;background:#f0f0f0"></div>
<span class="t" style="top:22px;font-size:11px;line-height:13px;letter-spacing:-0.165px;right:791px;">1</span>
<span class="t" style="top:22px;font-size:11px;line-height:13px;letter-spacing:-0.165px;right:695px;">100</span>
<span class="t" style="top:22px;font-size:11px;line-height:13px;letter-spacing:-0.019px;left:209px;">Cutting</span>
<span class="t" style="top:22px;font-size:11px;line-height:13px;letter-spacing:-0.165px;right:190px;">1</span>
<span class="t" style="top:22px;font-size:11px;line-height:13px;letter-spacing:0.050px;left:715px;">24/12/2030</span>
<span class="t" style="top:22px;font-size:11px;line-height:13px;letter-spacing:0.050px;left:797px;">24/12/2030</span>
<span class="t" style="top:22px;font-size:11px;line-height:13px;letter-spacing:-0.468px;left:873.5px;">Panel</span>
<div style="left:367px;top:21px;width:13px;height:13px;background:#fff;border:1px solid #9a9a9a"></div>
<div style="left:370px;top:24px;width:7px;height:7px;background:#5f5f5f"></div>
<div style="left:0px;top:37px;width:901px;height:18px;background:#f0f0f0"></div>
<div style="left:0px;top:37px;width:11px;height:18px;background:#f0f0f0"></div>
<span class="t" style="top:40px;font-size:11px;line-height:13px;letter-spacing:-0.165px;right:791px;">2</span>
<span class="t" style="top:40px;font-size:11px;line-height:13px;letter-spacing:-0.165px;right:695px;">200</span>
<span class="t" style="top:40px;font-size:11px;line-height:13px;letter-spacing:-0.303px;left:209px;">Edgebanding</span>
<span class="t" style="top:40px;font-size:11px;line-height:13px;letter-spacing:-0.165px;right:190px;">1</span>
<span class="t" style="top:40px;font-size:11px;line-height:13px;letter-spacing:0.050px;left:715px;">25/12/2030</span>
<span class="t" style="top:40px;font-size:11px;line-height:13px;letter-spacing:0.050px;left:797px;">25/12/2030</span>
<span class="t" style="top:40px;font-size:11px;line-height:13px;letter-spacing:-0.409px;left:873.5px;">Edgeb</span>
<div style="left:367px;top:39px;width:13px;height:13px;background:#fff;border:1px solid #9a9a9a"></div>
<div style="left:370px;top:42px;width:7px;height:7px;background:#5f5f5f"></div>
<div style="left:0px;top:55px;width:901px;height:18px;background:#e8d3b5"></div>
<div style="left:0px;top:55px;width:11px;height:18px;background:#f0f0f0"></div>
<div style="left:12px;top:55px;width:21px;height:17px;background:#e4e4e4"></div>
<span class="t" style="top:58px;font-size:11px;line-height:13px;letter-spacing:-0.165px;right:791px;">3</span>
<span class="t" style="top:58px;font-size:11px;line-height:13px;letter-spacing:-0.165px;right:695px;">300</span>
<span class="t" style="top:58px;font-size:11px;line-height:13px;letter-spacing:-0.507px;left:209px;">CNC Machining</span>
<span class="t" style="top:58px;font-size:11px;line-height:13px;letter-spacing:-0.165px;right:190px;">1</span>
<span class="t" style="top:58px;font-size:11px;line-height:13px;letter-spacing:0.050px;left:715px;">26/12/2030</span>
<span class="t" style="top:58px;font-size:11px;line-height:13px;letter-spacing:0.050px;left:797px;">26/12/2030</span>
<span class="t" style="top:58px;font-size:11px;line-height:13px;letter-spacing:-0.708px;left:873.5px;">CNC W</span>
<div style="left:367px;top:57px;width:13px;height:13px;background:#fff;border:1px solid #9a9a9a"></div>
<div style="left:370px;top:60px;width:7px;height:7px;background:#5f5f5f"></div>
<div style="left:0px;top:73px;width:901px;height:18px;background:#f0f0f0"></div>
<div style="left:0px;top:73px;width:11px;height:18px;background:#f0f0f0"></div>
<span class="t" style="top:76px;font-size:11px;line-height:13px;letter-spacing:-0.165px;right:791px;">4</span>
<span class="t" style="top:76px;font-size:11px;line-height:13px;letter-spacing:-0.165px;right:695px;">350</span>
<span class="t" style="top:76px;font-size:11px;line-height:13px;letter-spacing:-0.164px;left:209px;">Picking for Assembly</span>
<span class="t" style="top:76px;font-size:11px;line-height:13px;letter-spacing:-0.165px;right:190px;">1</span>
<span class="t" style="top:76px;font-size:11px;line-height:13px;letter-spacing:0.050px;left:715px;">27/12/2030</span>
<span class="t" style="top:76px;font-size:11px;line-height:13px;letter-spacing:0.050px;left:797px;">27/12/2030</span>
<span class="t" style="top:76px;font-size:11px;line-height:13px;letter-spacing:-0.175px;left:873.5px;">Parts</span>
<div style="left:367px;top:75px;width:13px;height:13px;background:#fff;border:1px solid #9a9a9a"></div>
<div style="left:370px;top:78px;width:7px;height:7px;background:#5f5f5f"></div>
<div style="left:0px;top:0px;width:901px;height:1px;background:#a6a6a6"></div>
<div style="left:0px;top:18px;width:901px;height:1px;background:#a6a6a6"></div>
<div style="left:0px;top:36px;width:901px;height:1px;background:#a6a6a6"></div>
<div style="left:0px;top:54px;width:901px;height:1px;background:#a6a6a6"></div>
<div style="left:0px;top:72px;width:901px;height:1px;background:#a6a6a6"></div>
<div style="left:0px;top:90px;width:901px;height:1px;background:#a6a6a6"></div>
<div style="left:0px;top:0px;width:1px;height:91px;background:#a6a6a6"></div>
<div style="left:11px;top:0px;width:1px;height:91px;background:#a6a6a6"></div>
<div style="left:111px;top:0px;width:1px;height:91px;background:#a6a6a6"></div>
<div style="left:207px;top:0px;width:1px;height:91px;background:#a6a6a6"></div>
<div style="left:343px;top:0px;width:1px;height:91px;background:#a6a6a6"></div>
<div style="left:404px;top:0px;width:1px;height:91px;background:#a6a6a6"></div>
<div style="left:508px;top:0px;width:1px;height:91px;background:#a6a6a6"></div>
<div style="left:603px;top:0px;width:1px;height:91px;background:#a6a6a6"></div>
<div style="left:712px;top:0px;width:1px;height:91px;background:#a6a6a6"></div>
<div style="left:794px;top:0px;width:1px;height:91px;background:#a6a6a6"></div>
<div style="left:871px;top:0px;width:1px;height:91px;background:#a6a6a6"></div>
<span class="t" style="top:4px;font-size:11px;line-height:13px;letter-spacing:-0.365px;left:13.5px;">Sequence</span>
<span class="t" style="top:4px;font-size:11px;line-height:13px;letter-spacing:-0.161px;left:113.5px;">Operation No</span>
<span class="t" style="top:4px;font-size:11px;line-height:13px;letter-spacing:-0.153px;left:209.5px;">Operation Description</span>
<span class="t" style="top:4px;font-size:11px;line-height:13px;letter-spacing:-0.180px;left:345.5px;">Complete</span>
<span class="t" style="top:4px;font-size:11px;line-height:13px;letter-spacing:-0.073px;left:406.5px;">Qty Completed</span>
<span class="t" style="top:4px;font-size:11px;line-height:13px;letter-spacing:-0.346px;left:510.5px;">Last Scan On</span>
<span class="t" style="top:4px;font-size:11px;line-height:13px;letter-spacing:-0.112px;left:605.5px;">Schedule Offset</span>
<span class="t" style="top:4px;font-size:11px;line-height:13px;letter-spacing:0.008px;left:714.5px;">Start Date</span>
<span class="t" style="top:4px;font-size:11px;line-height:13px;letter-spacing:-0.229px;left:796.5px;">Due Date</span>
<span class="t" style="top:4px;font-size:11px;line-height:13px;letter-spacing:0.082px;left:873.5px;">Work</span>
<svg style="left:2px;top:6px" width="8" height="8" viewBox="0 0 8 8"><path d="M4 0.500v7M0.500 4h7M1.500 1.500l5 5M6.500 1.500l-5 5" stroke="#555" stroke-width="0.9"/></svg>
<svg style="left:3px;top:60px" width="6" height="9" viewBox="0 0 6 9"><path d="M0.500 0.500v8L5 4.500z" fill="#333"/></svg>
<svg style="left:20px;top:60px" width="6" height="9" viewBox="0 0 6 9"><path d="M0.500 0.500v8L5 4.500z" fill="#333"/></svg>
</div>
<div style="left:766px;top:486px;width:900px;height:17px;background:#ececec"></div>
<div style="left:783px;top:486px;width:224px;height:17px;background:#cdcdcd"></div>
<svg style="left:770px;top:490.5px" width="8" height="8" viewBox="0 0 8 8"><path d="M5.5 1L2.2 4L5.5 7" fill="none" stroke="#666" stroke-width="1.800"/></svg>
<svg style="left:1654px;top:490.5px" width="8" height="8" viewBox="0 0 8 8"><path d="M2.2 1L5.5 4L2.2 7" fill="none" stroke="#666" stroke-width="1.800"/></svg>
<div style="left:1207px;top:508px;width:2px;height:2px;background:#454545;outline:1px solid #f6f6f6"></div>
<div style="left:1211px;top:508px;width:2px;height:2px;background:#454545;outline:1px solid #f6f6f6"></div>
<div style="left:1215px;top:508px;width:2px;height:2px;background:#454545;outline:1px solid #f6f6f6"></div>
<div style="left:1219px;top:508px;width:2px;height:2px;background:#454545;outline:1px solid #f6f6f6"></div>
<div style="left:1223px;top:508px;width:2px;height:2px;background:#454545;outline:1px solid #f6f6f6"></div>
<div style="left:766px;top:539px;width:900px;height:411px;border:1px solid #c0c0c0"></div>
<div class="tabA" style="left:767px;top:514px;width:49px;height:26px;"></div>
<span class="t" style="top:523px;font-size:11px;line-height:13px;letter-spacing:-0.237px;left:771.5px;">Drawing</span>
<div style="left:772px;top:545px;width:30px;height:30px;border:1px solid #b2b2b2"></div>
<svg style="left:775px;top:548px" width="24" height="24" viewBox="0 0 24 24"><circle cx="8.500" cy="8.500" r="6.500" fill="#f4f4f4" stroke="#8a8a8a" stroke-width="1.300"/><path d="M13.300 13.300l7.700 7.700" stroke="#808080" stroke-width="3.600"/><path d="M8.500 4.800v7.400M4.800 8.500h7.400" stroke="#3f7ac0" stroke-width="2.200"/></svg>
<div style="left:806px;top:545px;width:30px;height:30px;border:1px solid #b2b2b2"></div>
<svg style="left:809px;top:548px" width="24" height="24" viewBox="0 0 24 24"><circle cx="8.500" cy="8.500" r="6.500" fill="#f4f4f4" stroke="#8a8a8a" stroke-width="1.300"/><path d="M13.300 13.300l7.700 7.700" stroke="#808080" stroke-width="3.600"/><path d="M4.800 8.500h7.400" stroke="#3f7ac0" stroke-width="2.200"/></svg>
<div style="left:840px;top:545px;width:30px;height:30px;border:1px solid #b2b2b2"></div>
<svg style="left:843px;top:548px" width="24" height="24" viewBox="0 0 24 24"><circle cx="8.500" cy="8.500" r="6.500" fill="#f4f4f4" stroke="#8a8a8a" stroke-width="1.300"/><path d="M13.300 13.300l7.700 7.700" stroke="#808080" stroke-width="3.600"/><path d="M4.300 6.600l1.700-1.100v6.200M10.600 6.600l1.700-1.100v6.200" fill="none" stroke="#3f7ac0" stroke-width="1.500"/><path d="M8.100 7.200h1.300v1.400h-1.300zM8.100 10h1.300v1.400h-1.300z" fill="#3f7ac0"/></svg>
<div style="left:874px;top:545px;width:30px;height:30px;border:1px solid #b2b2b2"></div>
<svg style="left:877px;top:548px" width="24" height="24" viewBox="0 0 24 24"><path d="M4 1.500v21M20 1.500v21M1.500 4h21M1.500 20h21" stroke="#7a7a7a" stroke-width="1.500"/><path d="M12 6l2 2.800h-4zM12 18l2-2.800h-4zM6 12l2.800-2v4zM18 12l-2.800-2v4z" fill="#3f7ac0"/></svg>
<div style="left:1647px;top:540px;width:18px;height:409px;background:#ececec"></div>
<div style="left:1647px;top:738px;width:18px;height:17px;background:#cdcdcd"></div>
<svg style="left:1652px;top:545.5px" width="8" height="8" viewBox="0 0 8 8"><path d="M1 5.5L4 2.2L7 5.5" fill="none" stroke="#666" stroke-width="1.800"/></svg>
<svg style="left:1652px;top:936px" width="8" height="8" viewBox="0 0 8 8"><path d="M1 2.2L4 5.5L7 2.2" fill="none" stroke="#666" stroke-width="1.800"/></svg>
<svg style="left:0;top:0" width="1680" height="1050" viewBox="0 0 1680 1050"><rect x="1008" y="645" width="358" height="257" fill="#fff" stroke="#000" stroke-width="2"/><path d="M1007 665h360" stroke="#000" stroke-width="2"/><path d="M1008 583v31M1366 583v31" stroke="#000" stroke-width="2" fill="none"/><path d="M1008 598h157M1209 598h157" stroke="#000" stroke-width="2.600" fill="none"/><rect x="1181" y="594" width="13" height="13" fill="#fff"/><text x="1182" y="605" font-size="10.500" letter-spacing="-2.300" fill="#000" font-family="Liberation Sans">780</text><path d="M1351.500 631h28.500v28" stroke="#000" stroke-width="2" fill="none"/><path d="M1396 645h33M1396 902h33M1413 645v106.500M1413 795.500v106" stroke="#000" stroke-width="2" fill="none"/><rect x="1407" y="767.500" width="10" height="12" fill="#fff"/><text transform="translate(1409.500,773.500) rotate(90)" font-size="6" text-anchor="middle" letter-spacing="-0.800" fill="#222" font-family="Liberation Sans">558</text><g transform="translate(1185,637.5) rotate(0)"><rect x="-26.0" y="-3.500" width="52" height="7" fill="#fbfbfb"/><text x="0" y="2.200" font-size="6" text-anchor="middle" fill="#222" font-family="Liberation Sans">MEL_003_105_20</text></g><g transform="translate(1188,908) rotate(180)"><rect x="-26.0" y="-3.500" width="52" height="7" fill="#fbfbfb"/><text x="0" y="2.200" font-size="6" text-anchor="middle" fill="#222" font-family="Liberation Sans">MEL_003_105_20</text></g><g transform="translate(1001,774) rotate(-90)"><rect x="-26.0" y="-3.500" width="52" height="7" fill="#fbfbfb"/><text x="0" y="2.200" font-size="6" text-anchor="middle" fill="#222" font-family="Liberation Sans">MEL_003_105_20</text></g><g transform="translate(1372.5,771.5) rotate(90)"><rect x="-26.0" y="-3.500" width="52" height="7" fill="#fbfbfb"/><text x="0" y="2.200" font-size="6" text-anchor="middle" fill="#222" font-family="Liberation Sans">ABS_013_105_19</text></g><circle cx="1095.5" cy="687" r="1.900" fill="#f00"/><circle cx="1124.8" cy="687" r="1.900" fill="#f00"/><circle cx="1124.8" cy="687" r="1.100" fill="#000"/><circle cx="1154.2" cy="687" r="1.900" fill="#f00"/><circle cx="1183.5" cy="687" r="1.900" fill="#f00"/><circle cx="1212.8" cy="687" r="1.900" fill="#f00"/><circle cx="1242.2" cy="687" r="1.900" fill="#f00"/><circle cx="1242.2" cy="687" r="1.100" fill="#000"/><circle cx="1271.6" cy="687" r="1.900" fill="#f00"/><circle cx="1095.5" cy="872" r="1.900" fill="#f00"/><circle cx="1124.8" cy="872" r="1.900" fill="#f00"/><circle cx="1124.8" cy="872" r="1.100" fill="#000"/><circle cx="1154.2" cy="872" r="1.900" fill="#f00"/><circle cx="1183.5" cy="872" r="1.900" fill="#f00"/><circle cx="1212.8" cy="872" r="1.900" fill="#f00"/><circle cx="1242.2" cy="872" r="1.900" fill="#f00"/><circle cx="1242.2" cy="872" r="1.100" fill="#000"/><circle cx="1271.6" cy="872" r="1.900" fill="#f00"/><rect x="1009" y="698.5" width="4" height="4.500" rx="1" fill="#f00"/><rect x="1009" y="757.5" width="4" height="4.500" rx="1" fill="#f00"/><rect x="1009" y="816" width="4" height="4.500" rx="1" fill="#f00"/><rect x="1009" y="875" width="4" height="4.500" rx="1" fill="#f00"/><rect x="1009" y="889.5" width="4" height="4.500" rx="1" fill="#f00"/><circle cx="1361.500" cy="671.5" r="1.700" fill="#fff" stroke="#f00" stroke-width="1.900"/><circle cx="1361.500" cy="686.5" r="1.700" fill="#fff" stroke="#f00" stroke-width="1.900"/><circle cx="1361.500" cy="880" r="1.700" fill="#fff" stroke="#f00" stroke-width="1.900"/><circle cx="1361.500" cy="894.5" r="1.700" fill="#fff" stroke="#f00" stroke-width="1.900"/></svg>
<div style="left:1457px;top:975px;width:100px;height:25px;border:1px solid #8c8c8c;background:#f0f0f0"></div>
<svg style="left:1482px;top:980px" width="14" height="14" viewBox="0 0 14 14"><path d="M2.800 2.800l8.400 8.400M11.200 2.800l-8.400 8.400" stroke="#e88498" stroke-width="4.200"/></svg>
<span class="t" style="top:981px;font-size:11px;line-height:13px;letter-spacing:-0.373px;left:1500.5px;">Cancel</span>
<div style="left:1501px;top:993px;width:6px;height:1px;background:#1e1e1e"></div>
</body></html>
